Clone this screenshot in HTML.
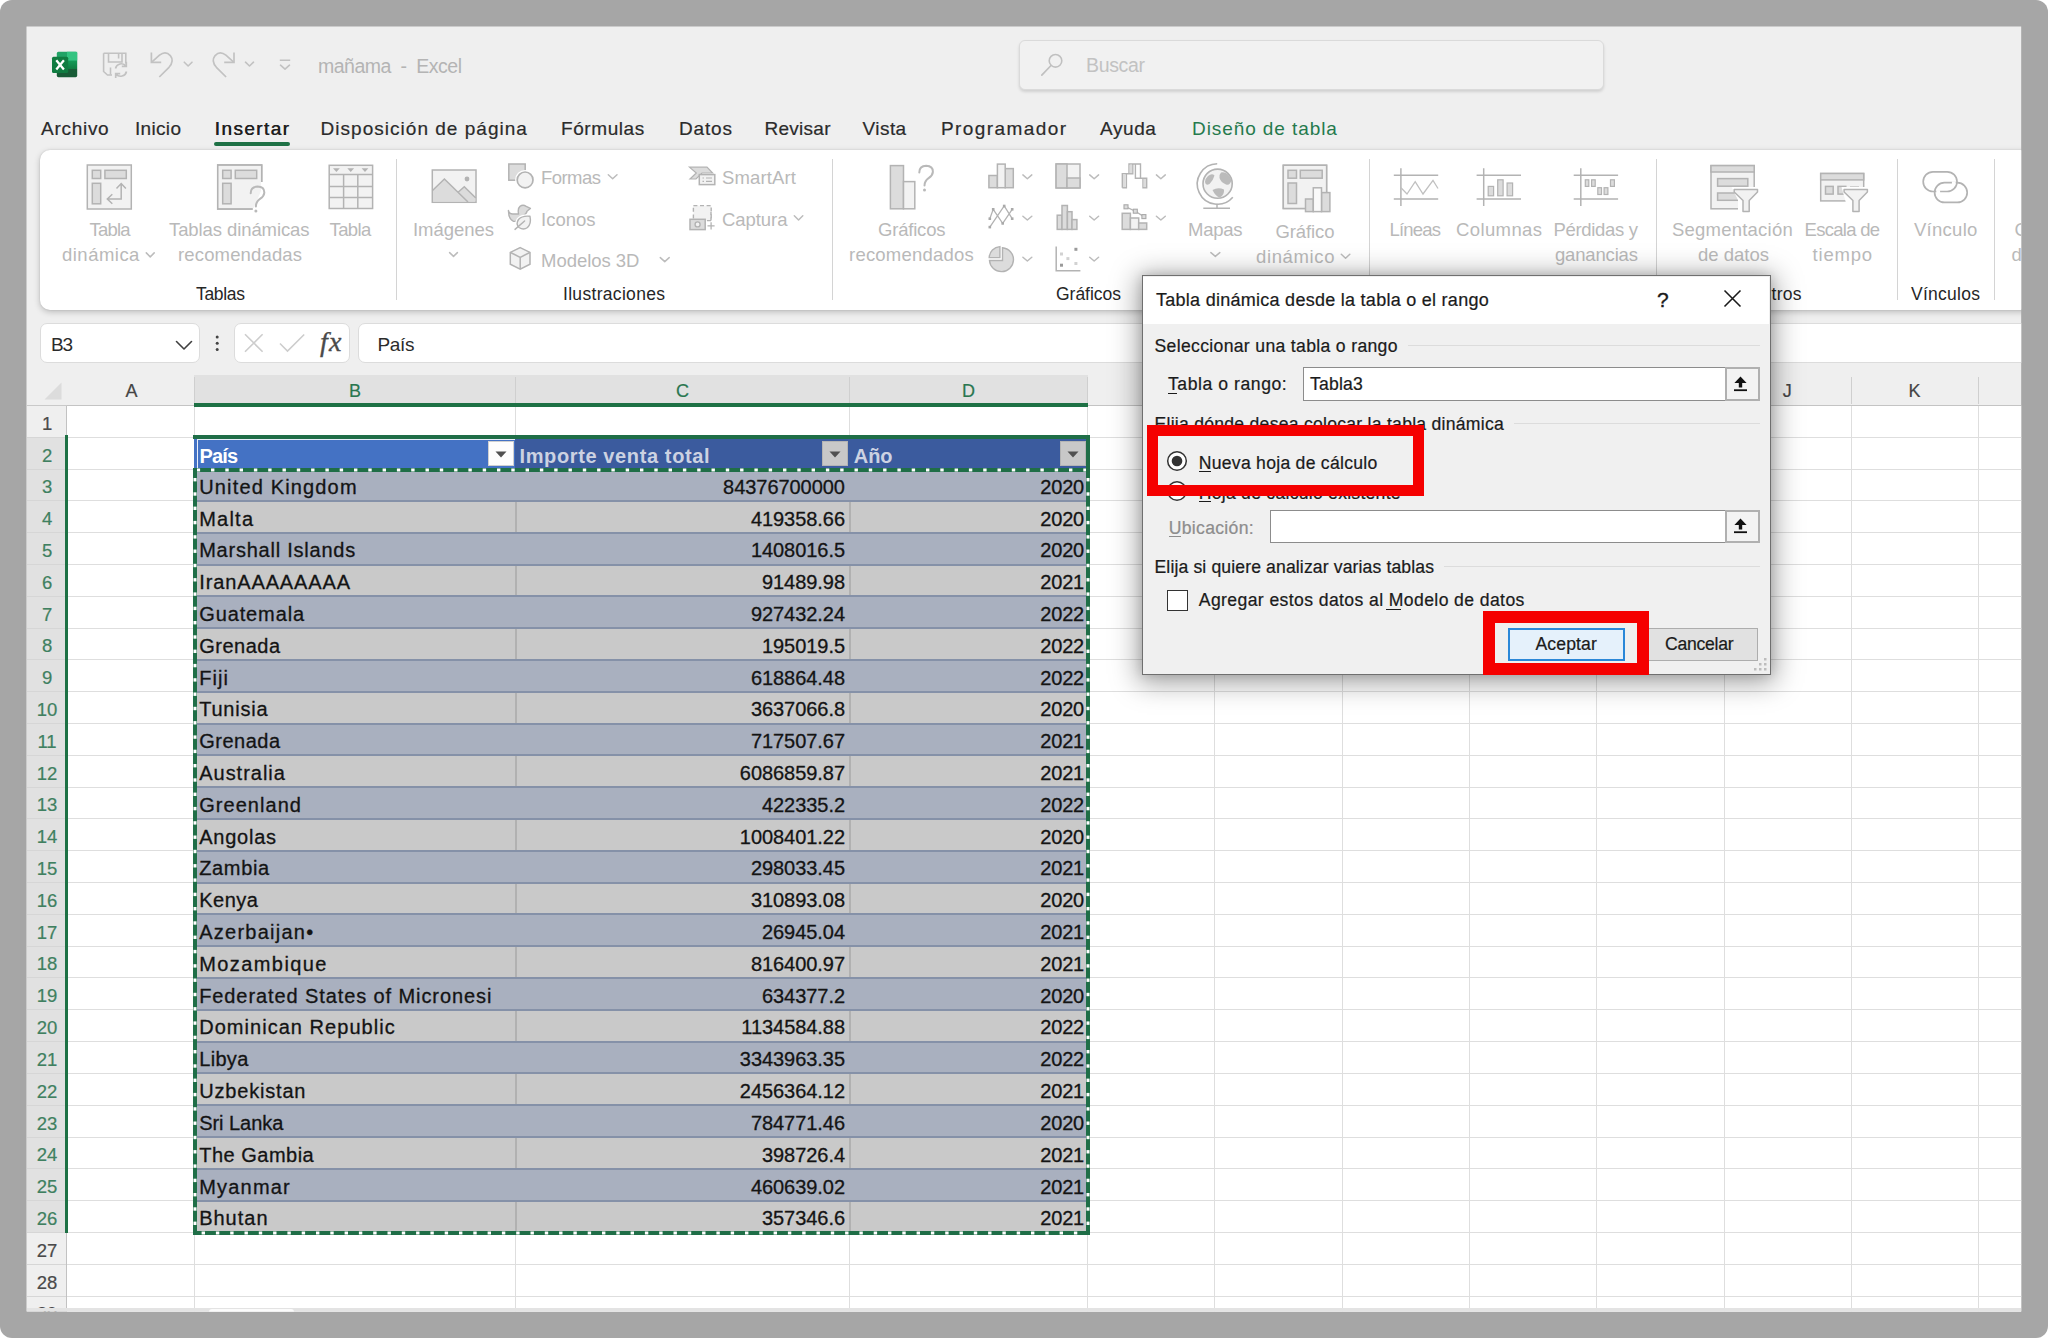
<!DOCTYPE html>
<html><head><meta charset="utf-8"><title>Excel</title>
<style>
html,body{margin:0;padding:0;background:#fff;}
body{width:2048px;height:1338px;position:relative;overflow:hidden;font-family:"Liberation Sans",sans-serif;}
.a{position:absolute;display:block;box-sizing:border-box;}
.t{position:absolute;white-space:pre;line-height:1;font-family:"Liberation Sans",sans-serif;}
#frame{position:absolute;left:0;top:0;width:2048px;height:1338px;background:#a6a6a6;border-radius:12px;}
#win{position:absolute;left:0;top:0;width:2048px;height:1338px;clip-path:inset(26.5px 26.8px 26.5px 26.5px);}
</style></head><body>
<div id="frame"></div>
<div id="win">
<div class="a" style="left:26px;top:26px;width:1996px;height:1286px;background:#efefef;"></div>
<span class="t" style="left:318.00px;top:56.69px;font-size:19.5px;color:#b4b4b4;letter-spacing:-0.517px;">mañama  -  Excel</span>
<div class="a" style="left:1019px;top:40px;width:585px;height:50px;background:#f1f1f1;border:1px solid #dadada;border-radius:6px;box-shadow:0 2px 3px rgba(0,0,0,0.13);"></div>
<span class="t" style="left:1086.00px;top:56.49px;font-size:19.5px;color:#c2c2c2;letter-spacing:-0.350px;">Buscar</span>
<span class="t" style="left:41.00px;top:119.12px;font-size:19px;color:#2b2b2b;letter-spacing:0.721px;-webkit-text-stroke:0.2px #2b2b2b;">Archivo</span>
<span class="t" style="left:135.00px;top:119.12px;font-size:19px;color:#2b2b2b;letter-spacing:0.325px;-webkit-text-stroke:0.2px #2b2b2b;">Inicio</span>
<span class="t" style="left:214.60px;top:119.12px;font-size:19px;color:#1f1f1f;letter-spacing:1.404px;text-shadow:0.4px 0 0 #1f1f1f;">Insertar</span>
<span class="t" style="left:320.60px;top:119.12px;font-size:19px;color:#2b2b2b;letter-spacing:1.020px;-webkit-text-stroke:0.2px #2b2b2b;">Disposición de página</span>
<span class="t" style="left:561.00px;top:119.12px;font-size:19px;color:#2b2b2b;letter-spacing:0.582px;-webkit-text-stroke:0.2px #2b2b2b;">Fórmulas</span>
<span class="t" style="left:679.00px;top:119.12px;font-size:19px;color:#2b2b2b;letter-spacing:0.844px;-webkit-text-stroke:0.2px #2b2b2b;">Datos</span>
<span class="t" style="left:764.50px;top:119.12px;font-size:19px;color:#2b2b2b;letter-spacing:0.271px;-webkit-text-stroke:0.2px #2b2b2b;">Revisar</span>
<span class="t" style="left:862.60px;top:119.12px;font-size:19px;color:#2b2b2b;letter-spacing:0.425px;-webkit-text-stroke:0.2px #2b2b2b;">Vista</span>
<span class="t" style="left:941.00px;top:119.12px;font-size:19px;color:#2b2b2b;letter-spacing:1.413px;-webkit-text-stroke:0.2px #2b2b2b;">Programador</span>
<span class="t" style="left:1100.00px;top:119.12px;font-size:19px;color:#2b2b2b;letter-spacing:0.594px;-webkit-text-stroke:0.2px #2b2b2b;">Ayuda</span>
<span class="t" style="left:1192.00px;top:119.12px;font-size:19px;color:#257a4d;letter-spacing:0.920px;">Diseño de tabla</span>
<div class="a" style="left:214px;top:142px;width:76px;height:4px;background:#1e7145;border-radius:2px;"></div>
<div class="a" style="left:40px;top:150px;width:2000px;height:160px;background:#ffffff;border-radius:10px;box-shadow:0 2px 6px rgba(0,0,0,0.22),0 0 2px rgba(0,0,0,0.12);"></div>
<div class="a" style="left:395.5px;top:159px;width:1.5px;height:141px;background:#d4d4d4;"></div>
<div class="a" style="left:831.5px;top:159px;width:1.5px;height:141px;background:#d4d4d4;"></div>
<div class="a" style="left:1368.5px;top:159px;width:1.5px;height:141px;background:#d4d4d4;"></div>
<div class="a" style="left:1655.5px;top:159px;width:1.5px;height:141px;background:#d4d4d4;"></div>
<div class="a" style="left:1896.5px;top:159px;width:1.5px;height:141px;background:#d4d4d4;"></div>
<div class="a" style="left:1993.5px;top:159px;width:1.5px;height:141px;background:#d4d4d4;"></div>
<span class="t" style="left:196.00px;top:285.89px;font-size:17.5px;color:#262626;letter-spacing:-0.325px;">Tablas</span>
<span class="t" style="left:563.00px;top:285.89px;font-size:17.5px;color:#262626;letter-spacing:0.312px;">Ilustraciones</span>
<span class="t" style="left:1056.00px;top:285.89px;font-size:17.5px;color:#262626;letter-spacing:-0.018px;">Gráficos</span>
<span class="t" style="left:1752.00px;top:285.89px;font-size:17.5px;color:#262626;letter-spacing:0.329px;">Filtros</span>
<span class="t" style="left:1911.00px;top:285.89px;font-size:17.5px;color:#262626;letter-spacing:0.268px;">Vínculos</span>
<span class="t" style="left:89.50px;top:221.04px;font-size:18.5px;color:#b9b9b9;letter-spacing:-0.781px;">Tabla</span>
<span class="t" style="left:62.00px;top:246.04px;font-size:18.5px;color:#b9b9b9;letter-spacing:0.482px;">dinámica</span>
<span class="t" style="left:169.00px;top:221.04px;font-size:18.5px;color:#b9b9b9;letter-spacing:-0.092px;">Tablas dinámicas</span>
<span class="t" style="left:178.00px;top:246.04px;font-size:18.5px;color:#b9b9b9;letter-spacing:0.148px;">recomendadas</span>
<span class="t" style="left:329.50px;top:221.04px;font-size:18.5px;color:#b9b9b9;letter-spacing:-0.594px;">Tabla</span>
<span class="t" style="left:413.00px;top:221.04px;font-size:18.5px;color:#b9b9b9;letter-spacing:-0.036px;">Imágenes</span>
<span class="t" style="left:541.00px;top:169.04px;font-size:18.5px;color:#b9b9b9;letter-spacing:-0.550px;">Formas</span>
<span class="t" style="left:541.00px;top:210.54px;font-size:18.5px;color:#b9b9b9;">Iconos</span>
<span class="t" style="left:541.00px;top:252.04px;font-size:18.5px;color:#b9b9b9;letter-spacing:-0.028px;">Modelos 3D</span>
<span class="t" style="left:722.00px;top:169.04px;font-size:18.5px;color:#b9b9b9;letter-spacing:0.143px;">SmartArt</span>
<span class="t" style="left:722.00px;top:210.54px;font-size:18.5px;color:#b9b9b9;letter-spacing:-0.062px;">Captura</span>
<span class="t" style="left:878.00px;top:221.04px;font-size:18.5px;color:#b9b9b9;letter-spacing:-0.196px;">Gráficos</span>
<span class="t" style="left:849.00px;top:246.04px;font-size:18.5px;color:#b9b9b9;letter-spacing:0.216px;">recomendados</span>
<span class="t" style="left:1188.00px;top:221.04px;font-size:18.5px;color:#b9b9b9;letter-spacing:-0.250px;">Mapas</span>
<span class="t" style="left:1275.50px;top:222.54px;font-size:18.5px;color:#b9b9b9;letter-spacing:-0.104px;">Gráfico</span>
<span class="t" style="left:1256.00px;top:247.54px;font-size:18.5px;color:#b9b9b9;letter-spacing:0.643px;">dinámico</span>
<span class="t" style="left:1389.50px;top:221.04px;font-size:18.5px;color:#b9b9b9;letter-spacing:-0.800px;">Líneas</span>
<span class="t" style="left:1456.00px;top:221.04px;font-size:18.5px;color:#b9b9b9;letter-spacing:0.393px;">Columnas</span>
<span class="t" style="left:1553.40px;top:221.04px;font-size:18.5px;color:#b9b9b9;letter-spacing:-0.308px;">Pérdidas y</span>
<span class="t" style="left:1555.00px;top:246.04px;font-size:18.5px;color:#b9b9b9;letter-spacing:-0.172px;">ganancias</span>
<span class="t" style="left:1672.00px;top:221.04px;font-size:18.5px;color:#b9b9b9;letter-spacing:0.223px;">Segmentación</span>
<span class="t" style="left:1698.00px;top:246.04px;font-size:18.5px;color:#b9b9b9;">de datos</span>
<span class="t" style="left:1804.60px;top:221.04px;font-size:18.5px;color:#b9b9b9;letter-spacing:-0.731px;">Escala de</span>
<span class="t" style="left:1812.60px;top:246.04px;font-size:18.5px;color:#b9b9b9;letter-spacing:0.780px;">tiempo</span>
<span class="t" style="left:1914.00px;top:221.04px;font-size:18.5px;color:#b9b9b9;letter-spacing:0.275px;">Vínculo</span>
<span class="t" style="left:2014.60px;top:221.04px;font-size:18.5px;color:#b9b9b9;">C</span>
<span class="t" style="left:2011.50px;top:246.04px;font-size:18.5px;color:#b9b9b9;">d</span>
<div class="a" style="left:40px;top:323px;width:160px;height:40px;background:#fff;border:1px solid #dcdcdc;border-radius:7px;"></div>
<div class="a" style="left:234px;top:323px;width:116px;height:40px;background:#fff;border:1px solid #dcdcdc;border-radius:7px;"></div>
<div class="a" style="left:358px;top:323px;width:1700px;height:40px;background:#fff;border:1px solid #dcdcdc;border-radius:7px;"></div>
<span class="t" style="left:51.00px;top:335.12px;font-size:19px;color:#2b2b2b;letter-spacing:-1.250px;">B3</span>
<span class="t" style="left:377.50px;top:335.12px;font-size:19px;color:#2b2b2b;letter-spacing:-0.333px;">País</span>
<span class="t" style="left:320.00px;top:328.00px;font-size:28px;color:#4a4a4a;letter-spacing:1.250px;font-style:italic;font-family:'Liberation Serif',serif;-webkit-text-stroke:0.35px #4a4a4a;">fx</span>
<div class="a" style="left:67px;top:406px;width:1960px;height:910px;background:#ffffff;"></div>
<div class="a" style="left:194px;top:375px;width:894px;height:29px;background:#e1e1e1;"></div>
<div class="a" style="left:27px;top:437px;width:39px;height:795px;background:#e1e1e1;"></div>
<div class="a" style="left:27px;top:405px;width:40px;height:1px;background:#c9c9c9;"></div>
<div class="a" style="left:67px;top:405px;width:1960px;height:1px;background:#c4c4c4;"></div>
<div class="a" style="left:27px;top:437px;width:40px;height:1px;background:#d6d6d6;"></div>
<div class="a" style="left:67px;top:437px;width:1960px;height:1px;background:#dedede;"></div>
<div class="a" style="left:27px;top:469px;width:40px;height:1px;background:#d6d6d6;"></div>
<div class="a" style="left:67px;top:469px;width:1960px;height:1px;background:#dedede;"></div>
<div class="a" style="left:27px;top:500px;width:40px;height:1px;background:#d6d6d6;"></div>
<div class="a" style="left:67px;top:500px;width:1960px;height:1px;background:#dedede;"></div>
<div class="a" style="left:27px;top:532px;width:40px;height:1px;background:#d6d6d6;"></div>
<div class="a" style="left:67px;top:532px;width:1960px;height:1px;background:#dedede;"></div>
<div class="a" style="left:27px;top:564px;width:40px;height:1px;background:#d6d6d6;"></div>
<div class="a" style="left:67px;top:564px;width:1960px;height:1px;background:#dedede;"></div>
<div class="a" style="left:27px;top:596px;width:40px;height:1px;background:#d6d6d6;"></div>
<div class="a" style="left:67px;top:596px;width:1960px;height:1px;background:#dedede;"></div>
<div class="a" style="left:27px;top:628px;width:40px;height:1px;background:#d6d6d6;"></div>
<div class="a" style="left:67px;top:628px;width:1960px;height:1px;background:#dedede;"></div>
<div class="a" style="left:27px;top:659px;width:40px;height:1px;background:#d6d6d6;"></div>
<div class="a" style="left:67px;top:659px;width:1960px;height:1px;background:#dedede;"></div>
<div class="a" style="left:27px;top:691px;width:40px;height:1px;background:#d6d6d6;"></div>
<div class="a" style="left:67px;top:691px;width:1960px;height:1px;background:#dedede;"></div>
<div class="a" style="left:27px;top:723px;width:40px;height:1px;background:#d6d6d6;"></div>
<div class="a" style="left:67px;top:723px;width:1960px;height:1px;background:#dedede;"></div>
<div class="a" style="left:27px;top:755px;width:40px;height:1px;background:#d6d6d6;"></div>
<div class="a" style="left:67px;top:755px;width:1960px;height:1px;background:#dedede;"></div>
<div class="a" style="left:27px;top:787px;width:40px;height:1px;background:#d6d6d6;"></div>
<div class="a" style="left:67px;top:787px;width:1960px;height:1px;background:#dedede;"></div>
<div class="a" style="left:27px;top:818px;width:40px;height:1px;background:#d6d6d6;"></div>
<div class="a" style="left:67px;top:818px;width:1960px;height:1px;background:#dedede;"></div>
<div class="a" style="left:27px;top:850px;width:40px;height:1px;background:#d6d6d6;"></div>
<div class="a" style="left:67px;top:850px;width:1960px;height:1px;background:#dedede;"></div>
<div class="a" style="left:27px;top:882px;width:40px;height:1px;background:#d6d6d6;"></div>
<div class="a" style="left:67px;top:882px;width:1960px;height:1px;background:#dedede;"></div>
<div class="a" style="left:27px;top:914px;width:40px;height:1px;background:#d6d6d6;"></div>
<div class="a" style="left:67px;top:914px;width:1960px;height:1px;background:#dedede;"></div>
<div class="a" style="left:27px;top:946px;width:40px;height:1px;background:#d6d6d6;"></div>
<div class="a" style="left:67px;top:946px;width:1960px;height:1px;background:#dedede;"></div>
<div class="a" style="left:27px;top:977px;width:40px;height:1px;background:#d6d6d6;"></div>
<div class="a" style="left:67px;top:977px;width:1960px;height:1px;background:#dedede;"></div>
<div class="a" style="left:27px;top:1009px;width:40px;height:1px;background:#d6d6d6;"></div>
<div class="a" style="left:67px;top:1009px;width:1960px;height:1px;background:#dedede;"></div>
<div class="a" style="left:27px;top:1041px;width:40px;height:1px;background:#d6d6d6;"></div>
<div class="a" style="left:67px;top:1041px;width:1960px;height:1px;background:#dedede;"></div>
<div class="a" style="left:27px;top:1073px;width:40px;height:1px;background:#d6d6d6;"></div>
<div class="a" style="left:67px;top:1073px;width:1960px;height:1px;background:#dedede;"></div>
<div class="a" style="left:27px;top:1105px;width:40px;height:1px;background:#d6d6d6;"></div>
<div class="a" style="left:67px;top:1105px;width:1960px;height:1px;background:#dedede;"></div>
<div class="a" style="left:27px;top:1137px;width:40px;height:1px;background:#d6d6d6;"></div>
<div class="a" style="left:67px;top:1137px;width:1960px;height:1px;background:#dedede;"></div>
<div class="a" style="left:27px;top:1168px;width:40px;height:1px;background:#d6d6d6;"></div>
<div class="a" style="left:67px;top:1168px;width:1960px;height:1px;background:#dedede;"></div>
<div class="a" style="left:27px;top:1200px;width:40px;height:1px;background:#d6d6d6;"></div>
<div class="a" style="left:67px;top:1200px;width:1960px;height:1px;background:#dedede;"></div>
<div class="a" style="left:27px;top:1232px;width:40px;height:1px;background:#d6d6d6;"></div>
<div class="a" style="left:67px;top:1232px;width:1960px;height:1px;background:#dedede;"></div>
<div class="a" style="left:27px;top:1264px;width:40px;height:1px;background:#d6d6d6;"></div>
<div class="a" style="left:67px;top:1264px;width:1960px;height:1px;background:#dedede;"></div>
<div class="a" style="left:27px;top:1296px;width:40px;height:1px;background:#d6d6d6;"></div>
<div class="a" style="left:67px;top:1296px;width:1960px;height:1px;background:#dedede;"></div>
<div class="a" style="left:27px;top:1327px;width:40px;height:1px;background:#d6d6d6;"></div>
<div class="a" style="left:67px;top:1327px;width:1960px;height:1px;background:#dedede;"></div>
<div class="a" style="left:66px;top:406px;width:1px;height:910px;background:#c2c2c2;"></div>
<div class="a" style="left:194px;top:406px;width:1px;height:910px;background:#dedede;"></div>
<div class="a" style="left:194px;top:377px;width:1px;height:27px;background:#cfcfcf;"></div>
<div class="a" style="left:515px;top:406px;width:1px;height:910px;background:#dedede;"></div>
<div class="a" style="left:515px;top:377px;width:1px;height:27px;background:#cfcfcf;"></div>
<div class="a" style="left:849px;top:406px;width:1px;height:910px;background:#dedede;"></div>
<div class="a" style="left:849px;top:377px;width:1px;height:27px;background:#cfcfcf;"></div>
<div class="a" style="left:1087px;top:406px;width:1px;height:910px;background:#dedede;"></div>
<div class="a" style="left:1087px;top:377px;width:1px;height:27px;background:#cfcfcf;"></div>
<div class="a" style="left:1214px;top:406px;width:1px;height:910px;background:#dedede;"></div>
<div class="a" style="left:1214px;top:377px;width:1px;height:27px;background:#cfcfcf;"></div>
<div class="a" style="left:1342px;top:406px;width:1px;height:910px;background:#dedede;"></div>
<div class="a" style="left:1342px;top:377px;width:1px;height:27px;background:#cfcfcf;"></div>
<div class="a" style="left:1469px;top:406px;width:1px;height:910px;background:#dedede;"></div>
<div class="a" style="left:1469px;top:377px;width:1px;height:27px;background:#cfcfcf;"></div>
<div class="a" style="left:1596px;top:406px;width:1px;height:910px;background:#dedede;"></div>
<div class="a" style="left:1596px;top:377px;width:1px;height:27px;background:#cfcfcf;"></div>
<div class="a" style="left:1724px;top:406px;width:1px;height:910px;background:#dedede;"></div>
<div class="a" style="left:1724px;top:377px;width:1px;height:27px;background:#cfcfcf;"></div>
<div class="a" style="left:1851px;top:406px;width:1px;height:910px;background:#dedede;"></div>
<div class="a" style="left:1851px;top:377px;width:1px;height:27px;background:#cfcfcf;"></div>
<div class="a" style="left:1978px;top:406px;width:1px;height:910px;background:#dedede;"></div>
<div class="a" style="left:1978px;top:377px;width:1px;height:27px;background:#cfcfcf;"></div>
<span class="t" style="left:125.50px;top:382.46px;font-size:18px;color:#454545;-webkit-text-stroke:0.2px #454545;">A</span>
<span class="t" style="left:349.00px;top:382.46px;font-size:18px;color:#2a7750;-webkit-text-stroke:0.2px #2a7750;">B</span>
<span class="t" style="left:676.00px;top:382.46px;font-size:18px;color:#2a7750;-webkit-text-stroke:0.2px #2a7750;">C</span>
<span class="t" style="left:962.00px;top:382.46px;font-size:18px;color:#2a7750;-webkit-text-stroke:0.2px #2a7750;">D</span>
<span class="t" style="left:1782.80px;top:382.46px;font-size:18px;color:#454545;-webkit-text-stroke:0.2px #454545;">J</span>
<span class="t" style="left:1908.50px;top:382.46px;font-size:18px;color:#454545;-webkit-text-stroke:0.2px #454545;">K</span>
<span class="t" style="left:41.88px;top:414.54px;font-size:18.5px;color:#4a4a4a;-webkit-text-stroke:0.2px #4a4a4a;">1</span>
<span class="t" style="left:41.88px;top:446.54px;font-size:18.5px;color:#3f8060;-webkit-text-stroke:0.2px #3f8060;">2</span>
<span class="t" style="left:41.88px;top:477.54px;font-size:18.5px;color:#3f8060;-webkit-text-stroke:0.2px #3f8060;">3</span>
<span class="t" style="left:41.88px;top:509.54px;font-size:18.5px;color:#3f8060;-webkit-text-stroke:0.2px #3f8060;">4</span>
<span class="t" style="left:41.88px;top:541.54px;font-size:18.5px;color:#3f8060;-webkit-text-stroke:0.2px #3f8060;">5</span>
<span class="t" style="left:41.88px;top:573.54px;font-size:18.5px;color:#3f8060;-webkit-text-stroke:0.2px #3f8060;">6</span>
<span class="t" style="left:41.88px;top:605.54px;font-size:18.5px;color:#3f8060;-webkit-text-stroke:0.2px #3f8060;">7</span>
<span class="t" style="left:41.88px;top:636.54px;font-size:18.5px;color:#3f8060;-webkit-text-stroke:0.2px #3f8060;">8</span>
<span class="t" style="left:41.88px;top:668.54px;font-size:18.5px;color:#3f8060;-webkit-text-stroke:0.2px #3f8060;">9</span>
<span class="t" style="left:36.69px;top:700.54px;font-size:18.5px;color:#3f8060;-webkit-text-stroke:0.2px #3f8060;">10</span>
<span class="t" style="left:37.38px;top:732.54px;font-size:18.5px;color:#3f8060;-webkit-text-stroke:0.2px #3f8060;">11</span>
<span class="t" style="left:36.69px;top:764.54px;font-size:18.5px;color:#3f8060;-webkit-text-stroke:0.2px #3f8060;">12</span>
<span class="t" style="left:36.69px;top:795.54px;font-size:18.5px;color:#3f8060;-webkit-text-stroke:0.2px #3f8060;">13</span>
<span class="t" style="left:36.69px;top:827.54px;font-size:18.5px;color:#3f8060;-webkit-text-stroke:0.2px #3f8060;">14</span>
<span class="t" style="left:36.69px;top:859.54px;font-size:18.5px;color:#3f8060;-webkit-text-stroke:0.2px #3f8060;">15</span>
<span class="t" style="left:36.69px;top:891.54px;font-size:18.5px;color:#3f8060;-webkit-text-stroke:0.2px #3f8060;">16</span>
<span class="t" style="left:36.69px;top:923.54px;font-size:18.5px;color:#3f8060;-webkit-text-stroke:0.2px #3f8060;">17</span>
<span class="t" style="left:36.69px;top:954.54px;font-size:18.5px;color:#3f8060;-webkit-text-stroke:0.2px #3f8060;">18</span>
<span class="t" style="left:36.69px;top:986.54px;font-size:18.5px;color:#3f8060;-webkit-text-stroke:0.2px #3f8060;">19</span>
<span class="t" style="left:36.69px;top:1018.54px;font-size:18.5px;color:#3f8060;-webkit-text-stroke:0.2px #3f8060;">20</span>
<span class="t" style="left:36.69px;top:1050.54px;font-size:18.5px;color:#3f8060;-webkit-text-stroke:0.2px #3f8060;">21</span>
<span class="t" style="left:36.69px;top:1082.54px;font-size:18.5px;color:#3f8060;-webkit-text-stroke:0.2px #3f8060;">22</span>
<span class="t" style="left:36.69px;top:1114.54px;font-size:18.5px;color:#3f8060;-webkit-text-stroke:0.2px #3f8060;">23</span>
<span class="t" style="left:36.69px;top:1145.54px;font-size:18.5px;color:#3f8060;-webkit-text-stroke:0.2px #3f8060;">24</span>
<span class="t" style="left:36.69px;top:1177.54px;font-size:18.5px;color:#3f8060;-webkit-text-stroke:0.2px #3f8060;">25</span>
<span class="t" style="left:36.69px;top:1209.54px;font-size:18.5px;color:#3f8060;-webkit-text-stroke:0.2px #3f8060;">26</span>
<span class="t" style="left:36.69px;top:1241.54px;font-size:18.5px;color:#4a4a4a;-webkit-text-stroke:0.2px #4a4a4a;">27</span>
<span class="t" style="left:36.69px;top:1273.54px;font-size:18.5px;color:#4a4a4a;-webkit-text-stroke:0.2px #4a4a4a;">28</span>
<span class="t" style="left:36.69px;top:1304.54px;font-size:18.5px;color:#4a4a4a;-webkit-text-stroke:0.2px #4a4a4a;">29</span>
<svg class="a" style="left:44px;top:382px;" width="18" height="18" viewBox="0 0 18 18"><path d="M17.5 0.5 L17.5 17.5 L0.5 17.5 Z" fill="#dcdcdc"/></svg>
<div class="a" style="left:194px;top:403px;width:894px;height:4px;background:#1e7145;"></div>
<div class="a" style="left:65px;top:435px;width:3px;height:798px;background:#1e7145;"></div>
<div class="a" style="left:194px;top:469px;width:894px;height:32px;background:#a9b0bf;"></div>
<div class="a" style="left:194px;top:501px;width:894px;height:32px;background:#c9c9c9;"></div>
<div class="a" style="left:515px;top:501px;width:1.5px;height:32px;background:#b1b1b1;"></div>
<div class="a" style="left:849px;top:501px;width:1.5px;height:32px;background:#b1b1b1;"></div>
<div class="a" style="left:194px;top:533px;width:894px;height:32px;background:#a9b0bf;"></div>
<div class="a" style="left:194px;top:565px;width:894px;height:31px;background:#c9c9c9;"></div>
<div class="a" style="left:515px;top:565px;width:1.5px;height:31px;background:#b1b1b1;"></div>
<div class="a" style="left:849px;top:565px;width:1.5px;height:31px;background:#b1b1b1;"></div>
<div class="a" style="left:194px;top:596px;width:894px;height:32px;background:#a9b0bf;"></div>
<div class="a" style="left:194px;top:628px;width:894px;height:32px;background:#c9c9c9;"></div>
<div class="a" style="left:515px;top:628px;width:1.5px;height:32px;background:#b1b1b1;"></div>
<div class="a" style="left:849px;top:628px;width:1.5px;height:32px;background:#b1b1b1;"></div>
<div class="a" style="left:194px;top:660px;width:894px;height:32px;background:#a9b0bf;"></div>
<div class="a" style="left:194px;top:692px;width:894px;height:32px;background:#c9c9c9;"></div>
<div class="a" style="left:515px;top:692px;width:1.5px;height:32px;background:#b1b1b1;"></div>
<div class="a" style="left:849px;top:692px;width:1.5px;height:32px;background:#b1b1b1;"></div>
<div class="a" style="left:194px;top:724px;width:894px;height:31px;background:#a9b0bf;"></div>
<div class="a" style="left:194px;top:755px;width:894px;height:32px;background:#c9c9c9;"></div>
<div class="a" style="left:515px;top:755px;width:1.5px;height:32px;background:#b1b1b1;"></div>
<div class="a" style="left:849px;top:755px;width:1.5px;height:32px;background:#b1b1b1;"></div>
<div class="a" style="left:194px;top:787px;width:894px;height:32px;background:#a9b0bf;"></div>
<div class="a" style="left:194px;top:819px;width:894px;height:32px;background:#c9c9c9;"></div>
<div class="a" style="left:515px;top:819px;width:1.5px;height:32px;background:#b1b1b1;"></div>
<div class="a" style="left:849px;top:819px;width:1.5px;height:32px;background:#b1b1b1;"></div>
<div class="a" style="left:194px;top:851px;width:894px;height:32px;background:#a9b0bf;"></div>
<div class="a" style="left:194px;top:883px;width:894px;height:31px;background:#c9c9c9;"></div>
<div class="a" style="left:515px;top:883px;width:1.5px;height:31px;background:#b1b1b1;"></div>
<div class="a" style="left:849px;top:883px;width:1.5px;height:31px;background:#b1b1b1;"></div>
<div class="a" style="left:194px;top:914px;width:894px;height:32px;background:#a9b0bf;"></div>
<div class="a" style="left:194px;top:946px;width:894px;height:32px;background:#c9c9c9;"></div>
<div class="a" style="left:515px;top:946px;width:1.5px;height:32px;background:#b1b1b1;"></div>
<div class="a" style="left:849px;top:946px;width:1.5px;height:32px;background:#b1b1b1;"></div>
<div class="a" style="left:194px;top:978px;width:894px;height:32px;background:#a9b0bf;"></div>
<div class="a" style="left:194px;top:1010px;width:894px;height:32px;background:#c9c9c9;"></div>
<div class="a" style="left:515px;top:1010px;width:1.5px;height:32px;background:#b1b1b1;"></div>
<div class="a" style="left:849px;top:1010px;width:1.5px;height:32px;background:#b1b1b1;"></div>
<div class="a" style="left:194px;top:1042px;width:894px;height:31px;background:#a9b0bf;"></div>
<div class="a" style="left:194px;top:1073px;width:894px;height:32px;background:#c9c9c9;"></div>
<div class="a" style="left:515px;top:1073px;width:1.5px;height:32px;background:#b1b1b1;"></div>
<div class="a" style="left:849px;top:1073px;width:1.5px;height:32px;background:#b1b1b1;"></div>
<div class="a" style="left:194px;top:1105px;width:894px;height:32px;background:#a9b0bf;"></div>
<div class="a" style="left:194px;top:1137px;width:894px;height:32px;background:#c9c9c9;"></div>
<div class="a" style="left:515px;top:1137px;width:1.5px;height:32px;background:#b1b1b1;"></div>
<div class="a" style="left:849px;top:1137px;width:1.5px;height:32px;background:#b1b1b1;"></div>
<div class="a" style="left:194px;top:1169px;width:894px;height:32px;background:#a9b0bf;"></div>
<div class="a" style="left:194px;top:1201px;width:894px;height:31px;background:#c9c9c9;"></div>
<div class="a" style="left:515px;top:1201px;width:1.5px;height:31px;background:#b1b1b1;"></div>
<div class="a" style="left:849px;top:1201px;width:1.5px;height:31px;background:#b1b1b1;"></div>
<div class="a" style="left:194px;top:500px;width:894px;height:2px;background:#8591a8;"></div>
<div class="a" style="left:194px;top:532px;width:894px;height:2px;background:#8591a8;"></div>
<div class="a" style="left:194px;top:564px;width:894px;height:2px;background:#8591a8;"></div>
<div class="a" style="left:194px;top:595px;width:894px;height:2px;background:#8591a8;"></div>
<div class="a" style="left:194px;top:627px;width:894px;height:2px;background:#8591a8;"></div>
<div class="a" style="left:194px;top:659px;width:894px;height:2px;background:#8591a8;"></div>
<div class="a" style="left:194px;top:691px;width:894px;height:2px;background:#8591a8;"></div>
<div class="a" style="left:194px;top:723px;width:894px;height:2px;background:#8591a8;"></div>
<div class="a" style="left:194px;top:754px;width:894px;height:2px;background:#8591a8;"></div>
<div class="a" style="left:194px;top:786px;width:894px;height:2px;background:#8591a8;"></div>
<div class="a" style="left:194px;top:818px;width:894px;height:2px;background:#8591a8;"></div>
<div class="a" style="left:194px;top:850px;width:894px;height:2px;background:#8591a8;"></div>
<div class="a" style="left:194px;top:882px;width:894px;height:2px;background:#8591a8;"></div>
<div class="a" style="left:194px;top:913px;width:894px;height:2px;background:#8591a8;"></div>
<div class="a" style="left:194px;top:945px;width:894px;height:2px;background:#8591a8;"></div>
<div class="a" style="left:194px;top:977px;width:894px;height:2px;background:#8591a8;"></div>
<div class="a" style="left:194px;top:1009px;width:894px;height:2px;background:#8591a8;"></div>
<div class="a" style="left:194px;top:1041px;width:894px;height:2px;background:#8591a8;"></div>
<div class="a" style="left:194px;top:1072px;width:894px;height:2px;background:#8591a8;"></div>
<div class="a" style="left:194px;top:1104px;width:894px;height:2px;background:#8591a8;"></div>
<div class="a" style="left:194px;top:1136px;width:894px;height:2px;background:#8591a8;"></div>
<div class="a" style="left:194px;top:1168px;width:894px;height:2px;background:#8591a8;"></div>
<div class="a" style="left:194px;top:1200px;width:894px;height:2px;background:#8591a8;"></div>
<div class="a" style="left:194px;top:438px;width:321px;height:31px;background:#4472c4;"></div>
<div class="a" style="left:515px;top:438px;width:573px;height:31px;background:#3b5b9e;"></div>
<div class="a" style="left:196.5px;top:439px;width:318.5px;height:1px;background:#e9eefa;"></div>
<div class="a" style="left:196.5px;top:439px;width:1px;height:29px;background:#e9eefa;"></div>
<span class="t" style="left:199.50px;top:445.77px;font-size:20px;color:#ffffff;letter-spacing:-0.875px;font-weight:700;">País</span>
<span class="t" style="left:519.50px;top:445.77px;font-size:20px;color:#ccd2e2;letter-spacing:0.618px;font-weight:700;">Importe venta total</span>
<span class="t" style="left:853.80px;top:445.77px;font-size:20px;color:#ccd2e2;letter-spacing:-0.087px;font-weight:700;">Año</span>
<div class="a" style="left:488px;top:441px;width:26px;height:25px;background:#fdfdfd;border:1px solid #d0d0d0;"></div>
<svg class="a" style="left:495px;top:451px;" width="12" height="7" viewBox="0 0 12 7"><path d="M0.5 0.5 L11.5 0.5 L6 6.5 Z" fill="#505050"/></svg>
<div class="a" style="left:822px;top:441px;width:26px;height:25px;background:#c8c8c8;border:1px solid #b4b4b4;"></div>
<svg class="a" style="left:829px;top:451px;" width="12" height="7" viewBox="0 0 12 7"><path d="M0.5 0.5 L11.5 0.5 L6 6.5 Z" fill="#505050"/></svg>
<div class="a" style="left:1060px;top:441px;width:26px;height:25px;background:#c8c8c8;border:1px solid #b4b4b4;"></div>
<svg class="a" style="left:1067px;top:451px;" width="12" height="7" viewBox="0 0 12 7"><path d="M0.5 0.5 L11.5 0.5 L6 6.5 Z" fill="#505050"/></svg>
<span class="t" style="left:199.20px;top:477.27px;font-size:20px;color:#141414;letter-spacing:1.158px;-webkit-text-stroke:0.3px #141414;">United Kingdom</span>
<span class="t" style="left:723.12px;top:477.27px;font-size:20px;color:#141414;letter-spacing:-0.050px;-webkit-text-stroke:0.3px #141414;">84376700000</span>
<span class="t" style="left:1040.30px;top:477.27px;font-size:20px;color:#141414;letter-spacing:-0.200px;-webkit-text-stroke:0.3px #141414;">2020</span>
<span class="t" style="left:199.20px;top:509.27px;font-size:20px;color:#141414;letter-spacing:1.231px;-webkit-text-stroke:0.3px #141414;">Malta</span>
<span class="t" style="left:750.90px;top:509.27px;font-size:20px;color:#141414;letter-spacing:-0.050px;-webkit-text-stroke:0.3px #141414;">419358.66</span>
<span class="t" style="left:1040.30px;top:509.27px;font-size:20px;color:#141414;letter-spacing:-0.200px;-webkit-text-stroke:0.3px #141414;">2020</span>
<span class="t" style="left:199.20px;top:540.27px;font-size:20px;color:#141414;letter-spacing:0.767px;-webkit-text-stroke:0.3px #141414;">Marshall Islands</span>
<span class="t" style="left:750.90px;top:540.27px;font-size:20px;color:#141414;letter-spacing:-0.050px;-webkit-text-stroke:0.3px #141414;">1408016.5</span>
<span class="t" style="left:1040.30px;top:540.27px;font-size:20px;color:#141414;letter-spacing:-0.200px;-webkit-text-stroke:0.3px #141414;">2020</span>
<span class="t" style="left:199.20px;top:572.27px;font-size:20px;color:#141414;letter-spacing:0.886px;-webkit-text-stroke:0.3px #141414;">IranAAAAAAAA</span>
<span class="t" style="left:761.98px;top:572.27px;font-size:20px;color:#141414;letter-spacing:-0.050px;-webkit-text-stroke:0.3px #141414;">91489.98</span>
<span class="t" style="left:1040.30px;top:572.27px;font-size:20px;color:#141414;letter-spacing:-0.200px;-webkit-text-stroke:0.3px #141414;">2021</span>
<span class="t" style="left:199.20px;top:604.27px;font-size:20px;color:#141414;letter-spacing:0.891px;-webkit-text-stroke:0.3px #141414;">Guatemala</span>
<span class="t" style="left:750.90px;top:604.27px;font-size:20px;color:#141414;letter-spacing:-0.050px;-webkit-text-stroke:0.3px #141414;">927432.24</span>
<span class="t" style="left:1040.30px;top:604.27px;font-size:20px;color:#141414;letter-spacing:-0.200px;-webkit-text-stroke:0.3px #141414;">2022</span>
<span class="t" style="left:199.20px;top:636.27px;font-size:20px;color:#141414;letter-spacing:0.504px;-webkit-text-stroke:0.3px #141414;">Grenada</span>
<span class="t" style="left:761.98px;top:636.27px;font-size:20px;color:#141414;letter-spacing:-0.050px;-webkit-text-stroke:0.3px #141414;">195019.5</span>
<span class="t" style="left:1040.30px;top:636.27px;font-size:20px;color:#141414;letter-spacing:-0.200px;-webkit-text-stroke:0.3px #141414;">2022</span>
<span class="t" style="left:199.20px;top:668.27px;font-size:20px;color:#141414;letter-spacing:1.033px;-webkit-text-stroke:0.3px #141414;">Fiji</span>
<span class="t" style="left:750.90px;top:668.27px;font-size:20px;color:#141414;letter-spacing:-0.050px;-webkit-text-stroke:0.3px #141414;">618864.48</span>
<span class="t" style="left:1040.30px;top:668.27px;font-size:20px;color:#141414;letter-spacing:-0.200px;-webkit-text-stroke:0.3px #141414;">2022</span>
<span class="t" style="left:199.20px;top:699.27px;font-size:20px;color:#141414;letter-spacing:0.792px;-webkit-text-stroke:0.3px #141414;">Tunisia</span>
<span class="t" style="left:750.90px;top:699.27px;font-size:20px;color:#141414;letter-spacing:-0.050px;-webkit-text-stroke:0.3px #141414;">3637066.8</span>
<span class="t" style="left:1040.30px;top:699.27px;font-size:20px;color:#141414;letter-spacing:-0.200px;-webkit-text-stroke:0.3px #141414;">2020</span>
<span class="t" style="left:199.20px;top:731.27px;font-size:20px;color:#141414;letter-spacing:0.504px;-webkit-text-stroke:0.3px #141414;">Grenada</span>
<span class="t" style="left:750.90px;top:731.27px;font-size:20px;color:#141414;letter-spacing:-0.050px;-webkit-text-stroke:0.3px #141414;">717507.67</span>
<span class="t" style="left:1040.30px;top:731.27px;font-size:20px;color:#141414;letter-spacing:-0.200px;-webkit-text-stroke:0.3px #141414;">2021</span>
<span class="t" style="left:199.20px;top:763.27px;font-size:20px;color:#141414;letter-spacing:0.991px;-webkit-text-stroke:0.3px #141414;">Australia</span>
<span class="t" style="left:739.83px;top:763.27px;font-size:20px;color:#141414;letter-spacing:-0.050px;-webkit-text-stroke:0.3px #141414;">6086859.87</span>
<span class="t" style="left:1040.30px;top:763.27px;font-size:20px;color:#141414;letter-spacing:-0.200px;-webkit-text-stroke:0.3px #141414;">2021</span>
<span class="t" style="left:199.20px;top:795.27px;font-size:20px;color:#141414;letter-spacing:1.041px;-webkit-text-stroke:0.3px #141414;">Greenland</span>
<span class="t" style="left:761.98px;top:795.27px;font-size:20px;color:#141414;letter-spacing:-0.050px;-webkit-text-stroke:0.3px #141414;">422335.2</span>
<span class="t" style="left:1040.30px;top:795.27px;font-size:20px;color:#141414;letter-spacing:-0.200px;-webkit-text-stroke:0.3px #141414;">2022</span>
<span class="t" style="left:199.20px;top:827.27px;font-size:20px;color:#141414;letter-spacing:0.758px;-webkit-text-stroke:0.3px #141414;">Angolas</span>
<span class="t" style="left:739.83px;top:827.27px;font-size:20px;color:#141414;letter-spacing:-0.050px;-webkit-text-stroke:0.3px #141414;">1008401.22</span>
<span class="t" style="left:1040.30px;top:827.27px;font-size:20px;color:#141414;letter-spacing:-0.200px;-webkit-text-stroke:0.3px #141414;">2020</span>
<span class="t" style="left:199.20px;top:858.27px;font-size:20px;color:#141414;letter-spacing:0.650px;-webkit-text-stroke:0.3px #141414;">Zambia</span>
<span class="t" style="left:750.90px;top:858.27px;font-size:20px;color:#141414;letter-spacing:-0.050px;-webkit-text-stroke:0.3px #141414;">298033.45</span>
<span class="t" style="left:1040.30px;top:858.27px;font-size:20px;color:#141414;letter-spacing:-0.200px;-webkit-text-stroke:0.3px #141414;">2021</span>
<span class="t" style="left:199.20px;top:890.27px;font-size:20px;color:#141414;letter-spacing:0.513px;-webkit-text-stroke:0.3px #141414;">Kenya</span>
<span class="t" style="left:750.90px;top:890.27px;font-size:20px;color:#141414;letter-spacing:-0.050px;-webkit-text-stroke:0.3px #141414;">310893.08</span>
<span class="t" style="left:1040.30px;top:890.27px;font-size:20px;color:#141414;letter-spacing:-0.200px;-webkit-text-stroke:0.3px #141414;">2020</span>
<span class="t" style="left:199.20px;top:922.27px;font-size:20px;color:#141414;letter-spacing:1.250px;-webkit-text-stroke:0.3px #141414;">Azerbaijan•</span>
<span class="t" style="left:761.98px;top:922.27px;font-size:20px;color:#141414;letter-spacing:-0.050px;-webkit-text-stroke:0.3px #141414;">26945.04</span>
<span class="t" style="left:1040.30px;top:922.27px;font-size:20px;color:#141414;letter-spacing:-0.200px;-webkit-text-stroke:0.3px #141414;">2021</span>
<span class="t" style="left:199.20px;top:954.27px;font-size:20px;color:#141414;letter-spacing:1.422px;-webkit-text-stroke:0.3px #141414;">Mozambique</span>
<span class="t" style="left:750.90px;top:954.27px;font-size:20px;color:#141414;letter-spacing:-0.050px;-webkit-text-stroke:0.3px #141414;">816400.97</span>
<span class="t" style="left:1040.30px;top:954.27px;font-size:20px;color:#141414;letter-spacing:-0.200px;-webkit-text-stroke:0.3px #141414;">2021</span>
<span class="t" style="left:199.20px;top:986.27px;font-size:20px;color:#141414;letter-spacing:0.905px;-webkit-text-stroke:0.3px #141414;">Federated States of Micronesi</span>
<span class="t" style="left:761.98px;top:986.27px;font-size:20px;color:#141414;letter-spacing:-0.050px;-webkit-text-stroke:0.3px #141414;">634377.2</span>
<span class="t" style="left:1040.30px;top:986.27px;font-size:20px;color:#141414;letter-spacing:-0.200px;-webkit-text-stroke:0.3px #141414;">2020</span>
<span class="t" style="left:199.20px;top:1017.27px;font-size:20px;color:#141414;letter-spacing:1.037px;-webkit-text-stroke:0.3px #141414;">Dominican Republic</span>
<span class="t" style="left:741.33px;top:1017.27px;font-size:20px;color:#141414;letter-spacing:-0.050px;-webkit-text-stroke:0.3px #141414;">1134584.88</span>
<span class="t" style="left:1040.30px;top:1017.27px;font-size:20px;color:#141414;letter-spacing:-0.200px;-webkit-text-stroke:0.3px #141414;">2022</span>
<span class="t" style="left:199.20px;top:1049.27px;font-size:20px;color:#141414;letter-spacing:0.331px;-webkit-text-stroke:0.3px #141414;">Libya</span>
<span class="t" style="left:739.83px;top:1049.27px;font-size:20px;color:#141414;letter-spacing:-0.050px;-webkit-text-stroke:0.3px #141414;">3343963.35</span>
<span class="t" style="left:1040.30px;top:1049.27px;font-size:20px;color:#141414;letter-spacing:-0.200px;-webkit-text-stroke:0.3px #141414;">2022</span>
<span class="t" style="left:199.20px;top:1081.27px;font-size:20px;color:#141414;letter-spacing:0.814px;-webkit-text-stroke:0.3px #141414;">Uzbekistan</span>
<span class="t" style="left:739.83px;top:1081.27px;font-size:20px;color:#141414;letter-spacing:-0.050px;-webkit-text-stroke:0.3px #141414;">2456364.12</span>
<span class="t" style="left:1040.30px;top:1081.27px;font-size:20px;color:#141414;letter-spacing:-0.200px;-webkit-text-stroke:0.3px #141414;">2021</span>
<span class="t" style="left:199.20px;top:1113.27px;font-size:20px;color:#141414;letter-spacing:-0.050px;-webkit-text-stroke:0.3px #141414;">Sri Lanka</span>
<span class="t" style="left:750.90px;top:1113.27px;font-size:20px;color:#141414;letter-spacing:-0.050px;-webkit-text-stroke:0.3px #141414;">784771.46</span>
<span class="t" style="left:1040.30px;top:1113.27px;font-size:20px;color:#141414;letter-spacing:-0.200px;-webkit-text-stroke:0.3px #141414;">2020</span>
<span class="t" style="left:199.20px;top:1145.27px;font-size:20px;color:#141414;letter-spacing:0.500px;-webkit-text-stroke:0.3px #141414;">The Gambia</span>
<span class="t" style="left:761.98px;top:1145.27px;font-size:20px;color:#141414;letter-spacing:-0.050px;-webkit-text-stroke:0.3px #141414;">398726.4</span>
<span class="t" style="left:1040.30px;top:1145.27px;font-size:20px;color:#141414;letter-spacing:-0.200px;-webkit-text-stroke:0.3px #141414;">2021</span>
<span class="t" style="left:199.20px;top:1177.27px;font-size:20px;color:#141414;letter-spacing:1.204px;-webkit-text-stroke:0.3px #141414;">Myanmar</span>
<span class="t" style="left:750.90px;top:1177.27px;font-size:20px;color:#141414;letter-spacing:-0.050px;-webkit-text-stroke:0.3px #141414;">460639.02</span>
<span class="t" style="left:1040.30px;top:1177.27px;font-size:20px;color:#141414;letter-spacing:-0.200px;-webkit-text-stroke:0.3px #141414;">2021</span>
<span class="t" style="left:199.20px;top:1208.27px;font-size:20px;color:#141414;letter-spacing:0.985px;-webkit-text-stroke:0.3px #141414;">Bhutan</span>
<span class="t" style="left:761.98px;top:1208.27px;font-size:20px;color:#141414;letter-spacing:-0.050px;-webkit-text-stroke:0.3px #141414;">357346.6</span>
<span class="t" style="left:1040.30px;top:1208.27px;font-size:20px;color:#141414;letter-spacing:-0.200px;-webkit-text-stroke:0.3px #141414;">2021</span>
<div class="a" style="left:193px;top:435px;width:897px;height:4px;background:#1f6e47;"></div>
<div class="a" style="left:1086px;top:435px;width:4px;height:37px;background:#1f6e47;"></div>
<div class="a" style="left:193px;top:468px;width:897px;height:4px;background:#1f6e47;"></div>
<svg class="a" style="left:193px;top:468px;" width="897" height="4" viewBox="0 0 897 4"><rect x="3.7" y="0.5" width="3.4" height="3" fill="#fff"/><rect x="18.0" y="0.5" width="3.4" height="3" fill="#fff"/><rect x="32.3" y="0.5" width="3.4" height="3" fill="#fff"/><rect x="46.6" y="0.5" width="3.4" height="3" fill="#fff"/><rect x="60.9" y="0.5" width="3.4" height="3" fill="#fff"/><rect x="75.2" y="0.5" width="3.4" height="3" fill="#fff"/><rect x="89.5" y="0.5" width="3.4" height="3" fill="#fff"/><rect x="103.8" y="0.5" width="3.4" height="3" fill="#fff"/><rect x="118.1" y="0.5" width="3.4" height="3" fill="#fff"/><rect x="132.4" y="0.5" width="3.4" height="3" fill="#fff"/><rect x="146.7" y="0.5" width="3.4" height="3" fill="#fff"/><rect x="161.0" y="0.5" width="3.4" height="3" fill="#fff"/><rect x="175.3" y="0.5" width="3.4" height="3" fill="#fff"/><rect x="189.6" y="0.5" width="3.4" height="3" fill="#fff"/><rect x="203.9" y="0.5" width="3.4" height="3" fill="#fff"/><rect x="218.2" y="0.5" width="3.4" height="3" fill="#fff"/><rect x="232.5" y="0.5" width="3.4" height="3" fill="#fff"/><rect x="246.8" y="0.5" width="3.4" height="3" fill="#fff"/><rect x="261.1" y="0.5" width="3.4" height="3" fill="#fff"/><rect x="275.4" y="0.5" width="3.4" height="3" fill="#fff"/><rect x="289.7" y="0.5" width="3.4" height="3" fill="#fff"/><rect x="304.0" y="0.5" width="3.4" height="3" fill="#fff"/><rect x="318.3" y="0.5" width="3.4" height="3" fill="#fff"/><rect x="332.6" y="0.5" width="3.4" height="3" fill="#fff"/><rect x="346.9" y="0.5" width="3.4" height="3" fill="#fff"/><rect x="361.2" y="0.5" width="3.4" height="3" fill="#fff"/><rect x="375.5" y="0.5" width="3.4" height="3" fill="#fff"/><rect x="389.8" y="0.5" width="3.4" height="3" fill="#fff"/><rect x="404.1" y="0.5" width="3.4" height="3" fill="#fff"/><rect x="418.4" y="0.5" width="3.4" height="3" fill="#fff"/><rect x="432.7" y="0.5" width="3.4" height="3" fill="#fff"/><rect x="447.0" y="0.5" width="3.4" height="3" fill="#fff"/><rect x="461.3" y="0.5" width="3.4" height="3" fill="#fff"/><rect x="475.6" y="0.5" width="3.4" height="3" fill="#fff"/><rect x="489.9" y="0.5" width="3.4" height="3" fill="#fff"/><rect x="504.2" y="0.5" width="3.4" height="3" fill="#fff"/><rect x="518.5" y="0.5" width="3.4" height="3" fill="#fff"/><rect x="532.8" y="0.5" width="3.4" height="3" fill="#fff"/><rect x="547.1" y="0.5" width="3.4" height="3" fill="#fff"/><rect x="561.4" y="0.5" width="3.4" height="3" fill="#fff"/><rect x="575.7" y="0.5" width="3.4" height="3" fill="#fff"/><rect x="590.0" y="0.5" width="3.4" height="3" fill="#fff"/><rect x="604.3" y="0.5" width="3.4" height="3" fill="#fff"/><rect x="618.6" y="0.5" width="3.4" height="3" fill="#fff"/><rect x="632.9" y="0.5" width="3.4" height="3" fill="#fff"/><rect x="647.2" y="0.5" width="3.4" height="3" fill="#fff"/><rect x="661.5" y="0.5" width="3.4" height="3" fill="#fff"/><rect x="675.8" y="0.5" width="3.4" height="3" fill="#fff"/><rect x="690.1" y="0.5" width="3.4" height="3" fill="#fff"/><rect x="704.4" y="0.5" width="3.4" height="3" fill="#fff"/><rect x="718.7" y="0.5" width="3.4" height="3" fill="#fff"/><rect x="733.0" y="0.5" width="3.4" height="3" fill="#fff"/><rect x="747.3" y="0.5" width="3.4" height="3" fill="#fff"/><rect x="761.6" y="0.5" width="3.4" height="3" fill="#fff"/><rect x="775.9" y="0.5" width="3.4" height="3" fill="#fff"/><rect x="790.2" y="0.5" width="3.4" height="3" fill="#fff"/><rect x="804.5" y="0.5" width="3.4" height="3" fill="#fff"/><rect x="818.8" y="0.5" width="3.4" height="3" fill="#fff"/><rect x="833.1" y="0.5" width="3.4" height="3" fill="#fff"/><rect x="847.4" y="0.5" width="3.4" height="3" fill="#fff"/><rect x="861.7" y="0.5" width="3.4" height="3" fill="#fff"/><rect x="876.0" y="0.5" width="3.4" height="3" fill="#fff"/><rect x="890.3" y="0.5" width="3.4" height="3" fill="#fff"/></svg>
<div class="a" style="left:193px;top:1230.5px;width:897px;height:4px;background:#1f6e47;"></div>
<svg class="a" style="left:193px;top:1230.5px;" width="897" height="4" viewBox="0 0 897 4"><rect x="8.6" y="0.5" width="3.4" height="3" fill="#fff"/><rect x="22.9" y="0.5" width="3.4" height="3" fill="#fff"/><rect x="37.2" y="0.5" width="3.4" height="3" fill="#fff"/><rect x="51.5" y="0.5" width="3.4" height="3" fill="#fff"/><rect x="65.8" y="0.5" width="3.4" height="3" fill="#fff"/><rect x="80.1" y="0.5" width="3.4" height="3" fill="#fff"/><rect x="94.4" y="0.5" width="3.4" height="3" fill="#fff"/><rect x="108.7" y="0.5" width="3.4" height="3" fill="#fff"/><rect x="123.0" y="0.5" width="3.4" height="3" fill="#fff"/><rect x="137.3" y="0.5" width="3.4" height="3" fill="#fff"/><rect x="151.6" y="0.5" width="3.4" height="3" fill="#fff"/><rect x="165.9" y="0.5" width="3.4" height="3" fill="#fff"/><rect x="180.2" y="0.5" width="3.4" height="3" fill="#fff"/><rect x="194.5" y="0.5" width="3.4" height="3" fill="#fff"/><rect x="208.8" y="0.5" width="3.4" height="3" fill="#fff"/><rect x="223.1" y="0.5" width="3.4" height="3" fill="#fff"/><rect x="237.4" y="0.5" width="3.4" height="3" fill="#fff"/><rect x="251.7" y="0.5" width="3.4" height="3" fill="#fff"/><rect x="266.0" y="0.5" width="3.4" height="3" fill="#fff"/><rect x="280.3" y="0.5" width="3.4" height="3" fill="#fff"/><rect x="294.6" y="0.5" width="3.4" height="3" fill="#fff"/><rect x="308.9" y="0.5" width="3.4" height="3" fill="#fff"/><rect x="323.2" y="0.5" width="3.4" height="3" fill="#fff"/><rect x="337.5" y="0.5" width="3.4" height="3" fill="#fff"/><rect x="351.8" y="0.5" width="3.4" height="3" fill="#fff"/><rect x="366.1" y="0.5" width="3.4" height="3" fill="#fff"/><rect x="380.4" y="0.5" width="3.4" height="3" fill="#fff"/><rect x="394.7" y="0.5" width="3.4" height="3" fill="#fff"/><rect x="409.0" y="0.5" width="3.4" height="3" fill="#fff"/><rect x="423.3" y="0.5" width="3.4" height="3" fill="#fff"/><rect x="437.6" y="0.5" width="3.4" height="3" fill="#fff"/><rect x="451.9" y="0.5" width="3.4" height="3" fill="#fff"/><rect x="466.2" y="0.5" width="3.4" height="3" fill="#fff"/><rect x="480.5" y="0.5" width="3.4" height="3" fill="#fff"/><rect x="494.8" y="0.5" width="3.4" height="3" fill="#fff"/><rect x="509.1" y="0.5" width="3.4" height="3" fill="#fff"/><rect x="523.4" y="0.5" width="3.4" height="3" fill="#fff"/><rect x="537.7" y="0.5" width="3.4" height="3" fill="#fff"/><rect x="552.0" y="0.5" width="3.4" height="3" fill="#fff"/><rect x="566.3" y="0.5" width="3.4" height="3" fill="#fff"/><rect x="580.6" y="0.5" width="3.4" height="3" fill="#fff"/><rect x="594.9" y="0.5" width="3.4" height="3" fill="#fff"/><rect x="609.2" y="0.5" width="3.4" height="3" fill="#fff"/><rect x="623.5" y="0.5" width="3.4" height="3" fill="#fff"/><rect x="637.8" y="0.5" width="3.4" height="3" fill="#fff"/><rect x="652.1" y="0.5" width="3.4" height="3" fill="#fff"/><rect x="666.4" y="0.5" width="3.4" height="3" fill="#fff"/><rect x="680.7" y="0.5" width="3.4" height="3" fill="#fff"/><rect x="695.0" y="0.5" width="3.4" height="3" fill="#fff"/><rect x="709.3" y="0.5" width="3.4" height="3" fill="#fff"/><rect x="723.6" y="0.5" width="3.4" height="3" fill="#fff"/><rect x="737.9" y="0.5" width="3.4" height="3" fill="#fff"/><rect x="752.2" y="0.5" width="3.4" height="3" fill="#fff"/><rect x="766.5" y="0.5" width="3.4" height="3" fill="#fff"/><rect x="780.8" y="0.5" width="3.4" height="3" fill="#fff"/><rect x="795.1" y="0.5" width="3.4" height="3" fill="#fff"/><rect x="809.4" y="0.5" width="3.4" height="3" fill="#fff"/><rect x="823.7" y="0.5" width="3.4" height="3" fill="#fff"/><rect x="838.0" y="0.5" width="3.4" height="3" fill="#fff"/><rect x="852.3" y="0.5" width="3.4" height="3" fill="#fff"/><rect x="866.6" y="0.5" width="3.4" height="3" fill="#fff"/><rect x="880.9" y="0.5" width="3.4" height="3" fill="#fff"/></svg>
<div class="a" style="left:193px;top:468px;width:4px;height:766.5px;background:#1f6e47;"></div>
<svg class="a" style="left:193px;top:468px;" width="4" height="766.5" viewBox="0 0 4 766.5"><rect x="0.5" y="10.0" width="3" height="3.4" fill="#fff"/><rect x="0.5" y="24.3" width="3" height="3.4" fill="#fff"/><rect x="0.5" y="38.6" width="3" height="3.4" fill="#fff"/><rect x="0.5" y="52.9" width="3" height="3.4" fill="#fff"/><rect x="0.5" y="67.2" width="3" height="3.4" fill="#fff"/><rect x="0.5" y="81.5" width="3" height="3.4" fill="#fff"/><rect x="0.5" y="95.8" width="3" height="3.4" fill="#fff"/><rect x="0.5" y="110.1" width="3" height="3.4" fill="#fff"/><rect x="0.5" y="124.4" width="3" height="3.4" fill="#fff"/><rect x="0.5" y="138.7" width="3" height="3.4" fill="#fff"/><rect x="0.5" y="153.0" width="3" height="3.4" fill="#fff"/><rect x="0.5" y="167.3" width="3" height="3.4" fill="#fff"/><rect x="0.5" y="181.6" width="3" height="3.4" fill="#fff"/><rect x="0.5" y="195.9" width="3" height="3.4" fill="#fff"/><rect x="0.5" y="210.2" width="3" height="3.4" fill="#fff"/><rect x="0.5" y="224.5" width="3" height="3.4" fill="#fff"/><rect x="0.5" y="238.8" width="3" height="3.4" fill="#fff"/><rect x="0.5" y="253.1" width="3" height="3.4" fill="#fff"/><rect x="0.5" y="267.4" width="3" height="3.4" fill="#fff"/><rect x="0.5" y="281.7" width="3" height="3.4" fill="#fff"/><rect x="0.5" y="296.0" width="3" height="3.4" fill="#fff"/><rect x="0.5" y="310.3" width="3" height="3.4" fill="#fff"/><rect x="0.5" y="324.6" width="3" height="3.4" fill="#fff"/><rect x="0.5" y="338.9" width="3" height="3.4" fill="#fff"/><rect x="0.5" y="353.2" width="3" height="3.4" fill="#fff"/><rect x="0.5" y="367.5" width="3" height="3.4" fill="#fff"/><rect x="0.5" y="381.8" width="3" height="3.4" fill="#fff"/><rect x="0.5" y="396.1" width="3" height="3.4" fill="#fff"/><rect x="0.5" y="410.4" width="3" height="3.4" fill="#fff"/><rect x="0.5" y="424.7" width="3" height="3.4" fill="#fff"/><rect x="0.5" y="439.0" width="3" height="3.4" fill="#fff"/><rect x="0.5" y="453.3" width="3" height="3.4" fill="#fff"/><rect x="0.5" y="467.6" width="3" height="3.4" fill="#fff"/><rect x="0.5" y="481.9" width="3" height="3.4" fill="#fff"/><rect x="0.5" y="496.2" width="3" height="3.4" fill="#fff"/><rect x="0.5" y="510.5" width="3" height="3.4" fill="#fff"/><rect x="0.5" y="524.8" width="3" height="3.4" fill="#fff"/><rect x="0.5" y="539.1" width="3" height="3.4" fill="#fff"/><rect x="0.5" y="553.4" width="3" height="3.4" fill="#fff"/><rect x="0.5" y="567.7" width="3" height="3.4" fill="#fff"/><rect x="0.5" y="582.0" width="3" height="3.4" fill="#fff"/><rect x="0.5" y="596.3" width="3" height="3.4" fill="#fff"/><rect x="0.5" y="610.6" width="3" height="3.4" fill="#fff"/><rect x="0.5" y="624.9" width="3" height="3.4" fill="#fff"/><rect x="0.5" y="639.2" width="3" height="3.4" fill="#fff"/><rect x="0.5" y="653.5" width="3" height="3.4" fill="#fff"/><rect x="0.5" y="667.8" width="3" height="3.4" fill="#fff"/><rect x="0.5" y="682.1" width="3" height="3.4" fill="#fff"/><rect x="0.5" y="696.4" width="3" height="3.4" fill="#fff"/><rect x="0.5" y="710.7" width="3" height="3.4" fill="#fff"/><rect x="0.5" y="725.0" width="3" height="3.4" fill="#fff"/><rect x="0.5" y="739.3" width="3" height="3.4" fill="#fff"/><rect x="0.5" y="753.6" width="3" height="3.4" fill="#fff"/></svg>
<div class="a" style="left:1086px;top:468px;width:4px;height:766.5px;background:#1f6e47;"></div>
<svg class="a" style="left:1086px;top:468px;" width="4" height="766.5" viewBox="0 0 4 766.5"><rect x="0.5" y="10.0" width="3" height="3.4" fill="#fff"/><rect x="0.5" y="24.3" width="3" height="3.4" fill="#fff"/><rect x="0.5" y="38.6" width="3" height="3.4" fill="#fff"/><rect x="0.5" y="52.9" width="3" height="3.4" fill="#fff"/><rect x="0.5" y="67.2" width="3" height="3.4" fill="#fff"/><rect x="0.5" y="81.5" width="3" height="3.4" fill="#fff"/><rect x="0.5" y="95.8" width="3" height="3.4" fill="#fff"/><rect x="0.5" y="110.1" width="3" height="3.4" fill="#fff"/><rect x="0.5" y="124.4" width="3" height="3.4" fill="#fff"/><rect x="0.5" y="138.7" width="3" height="3.4" fill="#fff"/><rect x="0.5" y="153.0" width="3" height="3.4" fill="#fff"/><rect x="0.5" y="167.3" width="3" height="3.4" fill="#fff"/><rect x="0.5" y="181.6" width="3" height="3.4" fill="#fff"/><rect x="0.5" y="195.9" width="3" height="3.4" fill="#fff"/><rect x="0.5" y="210.2" width="3" height="3.4" fill="#fff"/><rect x="0.5" y="224.5" width="3" height="3.4" fill="#fff"/><rect x="0.5" y="238.8" width="3" height="3.4" fill="#fff"/><rect x="0.5" y="253.1" width="3" height="3.4" fill="#fff"/><rect x="0.5" y="267.4" width="3" height="3.4" fill="#fff"/><rect x="0.5" y="281.7" width="3" height="3.4" fill="#fff"/><rect x="0.5" y="296.0" width="3" height="3.4" fill="#fff"/><rect x="0.5" y="310.3" width="3" height="3.4" fill="#fff"/><rect x="0.5" y="324.6" width="3" height="3.4" fill="#fff"/><rect x="0.5" y="338.9" width="3" height="3.4" fill="#fff"/><rect x="0.5" y="353.2" width="3" height="3.4" fill="#fff"/><rect x="0.5" y="367.5" width="3" height="3.4" fill="#fff"/><rect x="0.5" y="381.8" width="3" height="3.4" fill="#fff"/><rect x="0.5" y="396.1" width="3" height="3.4" fill="#fff"/><rect x="0.5" y="410.4" width="3" height="3.4" fill="#fff"/><rect x="0.5" y="424.7" width="3" height="3.4" fill="#fff"/><rect x="0.5" y="439.0" width="3" height="3.4" fill="#fff"/><rect x="0.5" y="453.3" width="3" height="3.4" fill="#fff"/><rect x="0.5" y="467.6" width="3" height="3.4" fill="#fff"/><rect x="0.5" y="481.9" width="3" height="3.4" fill="#fff"/><rect x="0.5" y="496.2" width="3" height="3.4" fill="#fff"/><rect x="0.5" y="510.5" width="3" height="3.4" fill="#fff"/><rect x="0.5" y="524.8" width="3" height="3.4" fill="#fff"/><rect x="0.5" y="539.1" width="3" height="3.4" fill="#fff"/><rect x="0.5" y="553.4" width="3" height="3.4" fill="#fff"/><rect x="0.5" y="567.7" width="3" height="3.4" fill="#fff"/><rect x="0.5" y="582.0" width="3" height="3.4" fill="#fff"/><rect x="0.5" y="596.3" width="3" height="3.4" fill="#fff"/><rect x="0.5" y="610.6" width="3" height="3.4" fill="#fff"/><rect x="0.5" y="624.9" width="3" height="3.4" fill="#fff"/><rect x="0.5" y="639.2" width="3" height="3.4" fill="#fff"/><rect x="0.5" y="653.5" width="3" height="3.4" fill="#fff"/><rect x="0.5" y="667.8" width="3" height="3.4" fill="#fff"/><rect x="0.5" y="682.1" width="3" height="3.4" fill="#fff"/><rect x="0.5" y="696.4" width="3" height="3.4" fill="#fff"/><rect x="0.5" y="710.7" width="3" height="3.4" fill="#fff"/><rect x="0.5" y="725.0" width="3" height="3.4" fill="#fff"/><rect x="0.5" y="739.3" width="3" height="3.4" fill="#fff"/><rect x="0.5" y="753.6" width="3" height="3.4" fill="#fff"/></svg>
<div class="a" style="left:27px;top:1308px;width:1994px;height:4px;background:#e3e3e3;"></div>
<div class="a" style="left:209px;top:1308.5px;width:85px;height:4px;background:#fbfbfb;border-radius:3px 3px 0 0;"></div>
<svg class="a" style="left:0;top:0;" width="2048" height="1338" viewBox="0 0 2048 1338"><defs><linearGradient id="xg" x1="0" y1="0" x2="0" y2="1"><stop offset="0" stop-color="#21a366"/><stop offset="0.35" stop-color="#21a366"/><stop offset="0.36" stop-color="#149a57"/><stop offset="0.68" stop-color="#107c41"/><stop offset="0.69" stop-color="#185c37"/><stop offset="1" stop-color="#185c37"/></linearGradient></defs><rect x="56.8" y="51.8" width="20.4" height="25.4" rx="1.6" fill="url(#xg)"/><rect x="67" y="51.8" width="10.2" height="8.6" fill="#33c481"/><rect x="52" y="56.8" width="16.2" height="16.2" rx="1.5" fill="#107c41"/><path d="M56.3 60.3 L63.9 69.5 M63.9 60.3 L56.3 69.5" stroke="#fff" stroke-width="2.3" fill="none"/><path d="M103.6 53.2 H125.8 V63.5 M103.6 53.2 V71.5 L107.5 75 H112" fill="none" stroke="#c2c2c2" stroke-width="1.6" /><path d="M108.5 53.5 V62 H122 V53.5 M118.6 54 V58.5" fill="none" stroke="#c2c2c2" stroke-width="1.6" /><path d="M110.5 67.5 V74.5" fill="none" stroke="#c2c2c2" stroke-width="1.6" /><path d="M115.5 68.5 A6 6 0 0 1 126 66 M126.3 61.8 V66.3 H121.8 M126.5 71.5 A6 6 0 0 1 116 74 M115.7 78 V73.7 H120.2" fill="none" stroke="#c2c2c2" stroke-width="1.7" /><path d="M151.4 52.4 V62.4 H161.2" fill="none" stroke="#c2c2c2" stroke-width="1.7" /><path d="M152 61.8 L159.5 55.2 Q165.5 50.3 170.3 55.6 Q174.6 61.2 169 67.3 L159.3 77" fill="none" stroke="#c2c2c2" stroke-width="1.7" /><path d="M184.3 62.2 L188.15 66 L192 62.2" fill="none" stroke="#c2c2c2" stroke-width="1.6" stroke-linecap="round" stroke-linejoin="round"/><path d="M234 52.4 V62.4 H224.2" fill="none" stroke="#c2c2c2" stroke-width="1.7" /><path d="M233.4 61.8 L225.9 55.2 Q219.9 50.3 215.1 55.6 Q210.8 61.2 216.4 67.3 L226.1 77" fill="none" stroke="#c2c2c2" stroke-width="1.7" /><path d="M245.5 62.2 L249.5 66 L253.5 62.2" fill="none" stroke="#c2c2c2" stroke-width="1.6" stroke-linecap="round" stroke-linejoin="round"/><path d="M279.8 60.2 H290.2" fill="none" stroke="#c2c2c2" stroke-width="1.6" /><path d="M280.5 65.2 L285.0 69.2 L289.5 65.2" fill="none" stroke="#c2c2c2" stroke-width="1.6" stroke-linecap="round" stroke-linejoin="round"/><circle cx="1055.50" cy="60.80" r="6.30" fill="none" stroke="#c0c0c0" stroke-width="1.6"/><path d="M1051 65.5 L1041.8 75.2" fill="none" stroke="#c0c0c0" stroke-width="1.7" stroke-linecap="round"/><rect x="87.30" y="165.00" width="44.00" height="44.00" fill="#f2f2f2" stroke="#b3b3b3" stroke-width="1.5" /><rect x="92.30" y="170.30" width="8.40" height="8.20" fill="#dcdcdc" stroke="#b3b3b3" stroke-width="1.5" /><rect x="104.90" y="170.30" width="21.40" height="8.20" fill="#dcdcdc" stroke="#b3b3b3" stroke-width="1.5" /><rect x="92.30" y="183.30" width="8.40" height="20.50" fill="#dcdcdc" stroke="#b3b3b3" stroke-width="1.5" /><path d="M121.2 184 V199 H107.5 M116.5 188.6 L121.2 183.6 L125.9 188.6 M112.3 194.3 L107.3 199 L112.3 203.7" fill="none" stroke="#b3b3b3" stroke-width="1.5" /><path d="M261.7 182 V165 H217.7 V209 H252.7" fill="none" stroke="#b3b3b3" stroke-width="1.5" /><path d="M218.39999999999998 165.7 H261.0 V191 L253.7 208.3 H218.39999999999998 Z" fill="#f2f2f2"/><path d="M261.7 182 V165 H217.7 V209 H252.7" fill="none" stroke="#b3b3b3" stroke-width="1.5" /><rect x="222.70" y="170.30" width="8.40" height="8.20" fill="#dcdcdc" stroke="#b3b3b3" stroke-width="1.5" /><rect x="235.30" y="170.30" width="21.40" height="8.20" fill="#dcdcdc" stroke="#b3b3b3" stroke-width="1.5" /><rect x="222.70" y="183.30" width="8.40" height="20.50" fill="#dcdcdc" stroke="#b3b3b3" stroke-width="1.5" /><g transform="translate(0 0)"><path d="M250.7 193.2 Q250.8 186.7 257.6 186.6 Q264.5 186.9 264.3 192.7 Q264.1 196.1 260 198.9 Q255.9 201.7 255.9 206.4" fill="none" stroke="#b9b9b9" stroke-width="2" stroke-linecap="round"/><circle cx="255.9" cy="210.9" r="1.5" fill="#b9b9b9"/></g><rect x="329.20" y="165.30" width="43.40" height="43.20" fill="#f2f2f2" stroke="#b3b3b3" stroke-width="1.5" /><path d="M329.2 174.6 H372.6 M329.2 186.5 H372.6 M329.2 197.5 H372.6 M343.6 174.6 V208.5 M357.8 174.6 V208.5" fill="none" stroke="#b3b3b3" stroke-width="1.5" /><path d="M333.0 168.2 H339.79999999999995 L336.4 172 Z" fill="#b3b3b3"/><path d="M347.3 168.2 H354.09999999999997 L350.7 172 Z" fill="#b3b3b3"/><path d="M361.6 168.2 H368.4 L365 172 Z" fill="#b3b3b3"/><rect x="432.30" y="170.00" width="43.70" height="32.30" fill="#f2f2f2" stroke="#b3b3b3" stroke-width="1.5" /><path d="M433 190 L444.4 179 L467.5 201.6 H433 Z" fill="#dcdcdc"/><path d="M458 193 L464.3 187 L475.3 197.7 V201.6 H467 Z" fill="#dcdcdc"/><path d="M432.5 190.5 L444.4 179 L468 202 M457.8 192.5 L464.3 186.7 L475.8 198" fill="none" stroke="#b3b3b3" stroke-width="1.5" /><circle cx="467.00" cy="179.00" r="2.40" fill="#b3b3b3" stroke="none" stroke-width="0"/><path d="M449.6 252.6 L453.5 256.4 L457.4 252.6" fill="none" stroke="#bcbcbc" stroke-width="1.5" stroke-linecap="round" stroke-linejoin="round"/><rect x="508.80" y="164.00" width="16.40" height="16.20" fill="#dcdcdc" stroke="#b3b3b3" stroke-width="1.5" /><circle cx="525.10" cy="179.90" r="10.00" fill="#fff" stroke="none" stroke-width="0"/><circle cx="525.10" cy="179.90" r="7.90" fill="#f2f2f2" stroke="#b3b3b3" stroke-width="1.7"/><path d="M608.3 174.8 L612.65 178.8 L617 174.8" fill="none" stroke="#bcbcbc" stroke-width="1.5" stroke-linecap="round" stroke-linejoin="round"/><path d="M508.4 210.4 Q509 214 512.8 214 H518.6 Q517.4 208.6 520 206.4 Q523 204.2 526.2 206.4 L530.4 208.4 L527 211.2 Q526.6 214 523.4 215.6 Q519.5 222.4 513.2 221.2 Q508.4 218.4 508.4 210.4 Z" fill="#dcdcdc" stroke="#b3b3b3" stroke-width="1.4" stroke-linejoin="round"/><path d="M530 216.3 Q522 215.5 518.5 219.5 Q515.5 224 519 227.5 Q523.5 230.5 527.5 227.5 Q531.5 223.5 530 216.3 Z" fill="#fff" stroke="#fff" stroke-width="4" /><path d="M530 216.3 Q522 215.5 518.5 219.5 Q515.5 224 519 227.5 Q523.5 230.5 527.5 227.5 Q531.5 223.5 530 216.3 Z" fill="#f2f2f2" stroke="#b3b3b3" stroke-width="1.4" stroke-linejoin="round"/><path d="M515 229.4 L524.6 221" fill="none" stroke="#b3b3b3" stroke-width="1.4" stroke-linecap="round"/><path d="M520.2 247.6 L530 252.4 V264.2 L520.2 269.2 L510.3 264.2 V252.4 Z" fill="#f2f2f2" stroke="#b3b3b3" stroke-width="1.5" /><path d="M510.5 252.5 L520.2 257.3 L529.8 252.5 M520.2 257.3 V269" fill="none" stroke="#b3b3b3" stroke-width="1.5" /><path d="M660.3 257.6 L664.75 261.6 L669.2 257.6" fill="none" stroke="#bcbcbc" stroke-width="1.5" stroke-linecap="round" stroke-linejoin="round"/><path d="M689.5 167.2 H707 L712.6 173 H702 L696 179 H690 L696.3 173 Z" fill="#dcdcdc" stroke="#b3b3b3" stroke-width="1.2"/><rect x="699.30" y="174.60" width="15.50" height="10.00" fill="#f2f2f2" stroke="#b3b3b3" stroke-width="1.5" /><path d="M702.5 178 H704 M706 178 H712 M702.5 181.4 H704 M706 181.4 H712" fill="none" stroke="#b3b3b3" stroke-width="1.2" /><rect x="693.4" y="205.6" width="17.8" height="15" fill="#f2f2f2" stroke="#b3b3b3" stroke-width="1.4" stroke-dasharray="4 2.6"/><path d="M711 212 V222" fill="none" stroke="#b3b3b3" stroke-width="1.4" stroke-dasharray="3 2.4"/><rect x="690.00" y="219.30" width="15.20" height="10.30" fill="#dcdcdc" stroke="#b3b3b3" stroke-width="1.5" /><circle cx="697.60" cy="224.40" r="2.50" fill="#f2f2f2" stroke="#b3b3b3" stroke-width="1.4"/><path d="M707.5 225.8 H714.6 M711.1 222.2 V229.4" fill="none" stroke="#b3b3b3" stroke-width="1.3" /><path d="M794.3 215.8 L798.55 220 L802.8 215.8" fill="none" stroke="#bcbcbc" stroke-width="1.5" stroke-linecap="round" stroke-linejoin="round"/><rect x="890.40" y="165.60" width="13.10" height="43.20" fill="#dcdcdc" stroke="#b3b3b3" stroke-width="1.5" /><rect x="903.50" y="181.60" width="11.30" height="27.20" fill="#f2f2f2" stroke="#b3b3b3" stroke-width="1.5" /><g transform="translate(668.6 -20.8)"><path d="M250.7 193.2 Q250.8 186.7 257.6 186.6 Q264.5 186.9 264.3 192.7 Q264.1 196.1 260 198.9 Q255.9 201.7 255.9 206.4" fill="none" stroke="#b9b9b9" stroke-width="2" stroke-linecap="round"/><circle cx="255.9" cy="210.9" r="1.5" fill="#b9b9b9"/></g><rect x="988.90" y="175.50" width="8.50" height="12.20" fill="#dcdcdc" stroke="#b3b3b3" stroke-width="1.5" /><rect x="1005.20" y="168.60" width="8.10" height="19.10" fill="#dcdcdc" stroke="#b3b3b3" stroke-width="1.5" /><rect x="997.40" y="164.10" width="7.80" height="23.60" fill="#f2f2f2" stroke="#b3b3b3" stroke-width="1.5" /><rect x="1056.10" y="164.00" width="23.90" height="23.90" fill="#f2f2f2" stroke="#b3b3b3" stroke-width="1.5" /><rect x="1056.10" y="164.00" width="10.90" height="23.90" fill="#dcdcdc" stroke="#b3b3b3" stroke-width="1.5" /><rect x="1067.00" y="178.00" width="13.00" height="9.90" fill="#dcdcdc" stroke="#b3b3b3" stroke-width="1.5" /><path d="M1122.3 187.8 V173.8 H1129 V164 H1140.5 V178.3 H1146.7 V187.8 H1143 V178.3 H1135.4 V164 M1132.8 164 V173.8 H1126.4 V187.8 H1122.3" fill="none" stroke="#b3b3b3" stroke-width="1.4" /><rect x="1129.7" y="164.7" width="2.4" height="8.4" fill="#dcdcdc"/><rect x="1123" y="174.5" width="2.7" height="12.6" fill="#dcdcdc"/><rect x="1143.7" y="179" width="2.3" height="8.1" fill="#dcdcdc"/><path d="M989.8 218.7 L993.2 209.3 L1002.7 223.4 L1012.2 209.3 M989.8 227.1 L1004.2 206 L1012.2 218.7" fill="none" stroke="#b3b3b3" stroke-width="1.3" /><rect x="988.5" y="217.4" width="2.6" height="2.6" fill="#a9a9a9"/><rect x="991.9" y="208.0" width="2.6" height="2.6" fill="#a9a9a9"/><rect x="1001.4" y="222.1" width="2.6" height="2.6" fill="#a9a9a9"/><rect x="1010.9" y="208.0" width="2.6" height="2.6" fill="#a9a9a9"/><rect x="988.5" y="225.8" width="2.6" height="2.6" fill="#a9a9a9"/><rect x="1002.9" y="204.7" width="2.6" height="2.6" fill="#a9a9a9"/><rect x="1010.9" y="217.4" width="2.6" height="2.6" fill="#a9a9a9"/><rect x="1057.20" y="215.20" width="4.80" height="14.20" fill="#dcdcdc" stroke="#b3b3b3" stroke-width="1.5" /><rect x="1062.00" y="205.50" width="5.40" height="23.90" fill="#dcdcdc" stroke="#b3b3b3" stroke-width="1.5" /><rect x="1067.40" y="211.70" width="4.60" height="17.70" fill="#dcdcdc" stroke="#b3b3b3" stroke-width="1.5" /><rect x="1072.00" y="219.60" width="4.90" height="9.80" fill="#dcdcdc" stroke="#b3b3b3" stroke-width="1.5" /><rect x="1122.20" y="213.30" width="8.20" height="16.10" fill="#dcdcdc" stroke="#b3b3b3" stroke-width="1.5" /><rect x="1130.40" y="218.00" width="8.30" height="11.40" fill="#f2f2f2" stroke="#b3b3b3" stroke-width="1.5" /><rect x="1138.70" y="223.00" width="8.00" height="6.40" fill="#dcdcdc" stroke="#b3b3b3" stroke-width="1.5" /><path d="M1126 206.8 L1135.3 211.2 L1143.9 216.6" fill="none" stroke="#b3b3b3" stroke-width="1.3" /><rect x="1124.0" y="204.8" width="4" height="4" fill="#dcdcdc" stroke="#a9a9a9" stroke-width="1.1"/><rect x="1133.3" y="209.2" width="4" height="4" fill="#dcdcdc" stroke="#a9a9a9" stroke-width="1.1"/><rect x="1141.9" y="214.6" width="4" height="4" fill="#dcdcdc" stroke="#a9a9a9" stroke-width="1.1"/><path d="M1002.5 247.7 A12 12 0 1 1 989.5 260.5 H1002.5 Z" fill="#dcdcdc" stroke="#b3b3b3" stroke-width="1.4"/><path d="M999.9 257.6 H989.2 A11.5 11.5 0 0 1 999.9 246.6 Z" fill="#dcdcdc" stroke="#b3b3b3" stroke-width="1.4"/><path d="M1056.2 246.4 V270.7 H1080.4" fill="none" stroke="#b3b3b3" stroke-width="1.5" /><rect x="1074.4" y="247.8" width="3" height="3" fill="#9a9a9a"/><rect x="1060.0" y="263.7" width="3" height="3" fill="#9a9a9a"/><rect x="1060.0" y="252.5" width="3" height="3" fill="#d2d2d2"/><rect x="1066.4" y="257.1" width="3" height="3" fill="#d2d2d2"/><rect x="1074.4" y="262.0" width="3" height="3" fill="#d2d2d2"/><path d="M1022.9 174.9 L1027.35 178.7 L1031.8 174.9" fill="none" stroke="#bcbcbc" stroke-width="1.5" stroke-linecap="round" stroke-linejoin="round"/><path d="M1022.9 216.2 L1027.35 220 L1031.8 216.2" fill="none" stroke="#bcbcbc" stroke-width="1.5" stroke-linecap="round" stroke-linejoin="round"/><path d="M1089.7 174.9 L1094.15 178.7 L1098.6000000000001 174.9" fill="none" stroke="#bcbcbc" stroke-width="1.5" stroke-linecap="round" stroke-linejoin="round"/><path d="M1089.7 216.2 L1094.15 220 L1098.6000000000001 216.2" fill="none" stroke="#bcbcbc" stroke-width="1.5" stroke-linecap="round" stroke-linejoin="round"/><path d="M1156.4 174.9 L1160.8500000000001 178.7 L1165.3000000000002 174.9" fill="none" stroke="#bcbcbc" stroke-width="1.5" stroke-linecap="round" stroke-linejoin="round"/><path d="M1156.4 216.2 L1160.8500000000001 220 L1165.3000000000002 216.2" fill="none" stroke="#bcbcbc" stroke-width="1.5" stroke-linecap="round" stroke-linejoin="round"/><path d="M1022.9 257.2 L1027.35 261 L1031.8 257.2" fill="none" stroke="#bcbcbc" stroke-width="1.5" stroke-linecap="round" stroke-linejoin="round"/><path d="M1089.7 257.2 L1094.15 261 L1098.6000000000001 257.2" fill="none" stroke="#bcbcbc" stroke-width="1.5" stroke-linecap="round" stroke-linejoin="round"/><circle cx="1217.60" cy="183.70" r="14.60" fill="#f2f2f2" stroke="#b3b3b3" stroke-width="1.6"/><path d="M1208 176 Q1212 173 1214.5 175.5 Q1213 181 1209.5 184 Q1205.5 186 1205 182 Q1205.5 178 1208 176 Z M1221 172.5 Q1228 171 1231.5 180 Q1230 186 1226 184.5 Q1221 182.5 1219.5 178 Q1219 174.5 1221 172.5 Z M1212.5 190 Q1218 187 1224 189.5 Q1224.5 195 1220 197.6 Q1215.5 196.5 1212.5 190 Z" fill="#bbbbbb"/><path d="M1217.2 163.8 A20.2 20.2 0 1 0 1232.8 197.2" fill="none" stroke="#b3b3b3" stroke-width="1.6" /><path d="M1217 203.8 V208.2 M1203.3 208.3 H1230" fill="none" stroke="#b3b3b3" stroke-width="1.5" /><path d="M1210.9 252.6 L1215.35 256.4 L1219.8 252.6" fill="none" stroke="#bcbcbc" stroke-width="1.5" stroke-linecap="round" stroke-linejoin="round"/><path d="M1305 208.6 H1283.3 V165.3 H1326.6 V192" fill="none" stroke="#b3b3b3" stroke-width="1.5" /><path d="M1284 166 H1325.9 V208 H1284 Z" fill="#f2f2f2"/><path d="M1305 208.6 H1283.3 V165.3 H1326.6 V192" fill="none" stroke="#b3b3b3" stroke-width="1.5" /><rect x="1288.00" y="170.30" width="8.50" height="7.90" fill="#dcdcdc" stroke="#b3b3b3" stroke-width="1.5" /><rect x="1300.30" y="170.30" width="21.90" height="7.90" fill="#dcdcdc" stroke="#b3b3b3" stroke-width="1.5" /><rect x="1288.00" y="183.00" width="8.50" height="20.50" fill="#dcdcdc" stroke="#b3b3b3" stroke-width="1.5" /><rect x="1305.50" y="199.00" width="7.80" height="12.60" fill="#dcdcdc" stroke="#b3b3b3" stroke-width="1.5" /><rect x="1321.50" y="192.60" width="8.40" height="19.00" fill="#dcdcdc" stroke="#b3b3b3" stroke-width="1.5" /><rect x="1313.30" y="187.80" width="8.20" height="23.80" fill="#fafafa" stroke="#b3b3b3" stroke-width="1.5" /><path d="M1341.3 254.3 L1345.55 258.3 L1349.8 254.3" fill="none" stroke="#bcbcbc" stroke-width="1.5" stroke-linecap="round" stroke-linejoin="round"/><path d="M1400.8999999999999 168.3 V205.9 M1393.8 175.3 H1438.2 M1393.8 199 H1438.2" fill="none" stroke="#b3b3b3" stroke-width="1.5" /><path d="M1401 187.8 L1407 194 L1415.2 181.7 L1423 194 L1433 180.3 L1438 188.5" fill="none" stroke="#c0c0c0" stroke-width="1.3" /><path d="M1483.6999999999998 168.3 V205.9 M1476.6 175.3 H1521.0 M1476.6 199 H1521.0" fill="none" stroke="#b3b3b3" stroke-width="1.5" /><rect x="1488.20" y="186.40" width="5.40" height="9.40" fill="#dcdcdc" stroke="#b3b3b3" stroke-width="1.2" /><rect x="1497.70" y="179.80" width="5.40" height="16.00" fill="#dcdcdc" stroke="#b3b3b3" stroke-width="1.2" /><rect x="1507.10" y="183.00" width="5.50" height="12.80" fill="#dcdcdc" stroke="#b3b3b3" stroke-width="1.2" /><path d="M1580.8 168.3 V205.9 M1573.7 175.3 H1618.1000000000001 M1573.7 199 H1618.1000000000001" fill="none" stroke="#b3b3b3" stroke-width="1.5" /><rect x="1585.30" y="179.80" width="3.50" height="6.60" fill="#dcdcdc" stroke="#b3b3b3" stroke-width="1.2" /><rect x="1591.60" y="179.80" width="3.60" height="6.60" fill="#dcdcdc" stroke="#b3b3b3" stroke-width="1.2" /><rect x="1597.80" y="187.70" width="3.70" height="6.80" fill="#dcdcdc" stroke="#b3b3b3" stroke-width="1.2" /><rect x="1604.10" y="187.70" width="3.80" height="6.80" fill="#dcdcdc" stroke="#b3b3b3" stroke-width="1.2" /><rect x="1610.50" y="179.80" width="3.90" height="6.60" fill="#dcdcdc" stroke="#b3b3b3" stroke-width="1.2" /><rect x="1711.00" y="165.60" width="43.20" height="43.20" fill="#f2f2f2" stroke="#b3b3b3" stroke-width="1.5" /><rect x="1711.00" y="165.60" width="43.20" height="6.40" fill="#dcdcdc" stroke="#b3b3b3" stroke-width="1.5" /><rect x="1717.60" y="178.60" width="30.20" height="7.60" fill="#dcdcdc" stroke="#b3b3b3" stroke-width="1.5" /><rect x="1717.60" y="193.00" width="22.40" height="7.30" fill="#dcdcdc" stroke="#b3b3b3" stroke-width="1.5" /><path d="M1731.5 187 H1760 V213 H1738 V200 Z" fill="#fff"/><path d="M1734.2 189.4 H1757.5 V192 L1749.2 200.5 V211.5 H1743.0 V200.5 L1734.2 192 Z" fill="#f2f2f2" stroke="#b3b3b3" stroke-width="1.5" stroke-linejoin="round"/><rect x="1820.70" y="173.50" width="43.00" height="27.40" fill="#f2f2f2" stroke="#b3b3b3" stroke-width="1.5" /><rect x="1820.70" y="173.50" width="43.00" height="6.40" fill="#dcdcdc" stroke="#b3b3b3" stroke-width="1.5" /><rect x="1825.50" y="186.40" width="7.70" height="7.70" fill="#dcdcdc" stroke="#b3b3b3" stroke-width="1.5" /><rect x="1838.00" y="186.40" width="7.80" height="7.70" fill="#dcdcdc" stroke="#b3b3b3" stroke-width="1.5" /><path d="M1850 186.5 H1859" fill="none" stroke="#cfcfcf" stroke-width="1.2" /><path d="M1841.5 187 H1870 V213 H1848 V203 H1846 Z" fill="#fff"/><path d="M1844.1 189.4 H1867.3999999999999 V192 L1859.1 200.5 V211.5 H1852.8999999999999 V200.5 L1844.1 192 Z" fill="#f2f2f2" stroke="#b3b3b3" stroke-width="1.5" stroke-linejoin="round"/><rect x="1923.2" y="171.8" width="33.8" height="19.7" rx="9.8" fill="none" stroke="#b3b3b3" stroke-width="1.7"/><rect x="1934.6" y="182.7" width="32.6" height="19.7" rx="9.8" fill="none" stroke="#b3b3b3" stroke-width="1.7"/><rect x="1936.3" y="190.2" width="3.8" height="2.8" fill="#fff"/><rect x="1951.9" y="181.4" width="3.8" height="2.8" fill="#fff"/><path d="M146.3 252.9 L150.25 256.9 L154.2 252.9" fill="none" stroke="#bcbcbc" stroke-width="1.5" stroke-linecap="round" stroke-linejoin="round"/><path d="M176.5 341.5 L184 349 L191.5 341.5" fill="none" stroke="#404040" stroke-width="1.6" stroke-linecap="round" stroke-linejoin="round"/><circle cx="217.2" cy="337" r="1.5" fill="#444"/><circle cx="217.2" cy="343.2" r="1.5" fill="#444"/><circle cx="217.2" cy="349.4" r="1.5" fill="#444"/><path d="M245 334.3 L262.6 351.8 M262.6 334.3 L245 351.8" fill="none" stroke="#cdcdcd" stroke-width="1.6" /><path d="M280 343.5 L287.5 351 L304.2 334.5" fill="none" stroke="#cdcdcd" stroke-width="1.6" /></svg>
<div class="a" style="left:1141.5px;top:275px;width:629.0px;height:399.5px;background:#f0f0f0;border:1.5px solid #6f6f6f;box-shadow:0 4px 26px 4px rgba(0,0,0,0.36),0 0 10px rgba(0,0,0,0.14);"></div>
<div class="a" style="left:1143.0px;top:276.5px;width:626.0px;height:47.5px;background:#ffffff;"></div>
<span class="t" style="left:1156.00px;top:291.46px;font-size:18px;color:#1b1b1b;letter-spacing:0.269px;-webkit-text-stroke:0.22px #1b1b1b;">Tabla dinámica desde la tabla o el rango</span>
<span class="t" style="left:1657.00px;top:288.92px;font-size:21px;color:#1b1b1b;-webkit-text-stroke:0.35px #1b1b1b;">?</span>
<svg class="a" style="left:1723px;top:289px;" width="19" height="19" viewBox="0 0 19 19"><path d="M1.5 1.5 L17.5 17.5 M17.5 1.5 L1.5 17.5" stroke="#1b1b1b" stroke-width="1.6" fill="none"/></svg>
<span class="t" style="left:1154.50px;top:338.30px;font-size:17.6px;color:#1b1b1b;letter-spacing:0.330px;-webkit-text-stroke:0.22px #1b1b1b;">Seleccionar una tabla o rango</span>
<div class="a" style="left:1408px;top:345px;width:352px;height:1px;background:#dcdcdc;"></div>
<span class="t" style="left:1168.00px;top:375.80px;font-size:17.6px;color:#1b1b1b;letter-spacing:0.558px;-webkit-text-stroke:0.22px #1b1b1b;">Tabla o rango:</span>
<div class="a" style="left:1168px;top:392.5px;width:9px;height:1.3px;background:#1b1b1b;"></div>
<div class="a" style="left:1303px;top:367px;width:457px;height:33.5px;background:#ffffff;border:1.5px solid #8c8c8c;"></div>
<span class="t" style="left:1310.00px;top:375.80px;font-size:17.6px;color:#1b1b1b;letter-spacing:0.200px;-webkit-text-stroke:0.22px #1b1b1b;">Tabla3</span>
<div class="a" style="left:1725px;top:367px;width:34.5px;height:33.5px;background:#f3f3f3;border:2px solid #b0b0b0;"></div>
<svg class="a" style="left:1733px;top:375.5px;" width="15" height="16" viewBox="0 0 15 16"><path d="M7.5 0.5 L13.6 7 L9.2 7 L9.2 11.5 L5.8 11.5 L5.8 7 L1.4 7 Z" fill="#111"/><rect x="1" y="13.3" width="13" height="1.8" fill="#111"/></svg>
<span class="t" style="left:1154.50px;top:415.80px;font-size:17.6px;color:#1b1b1b;letter-spacing:0.259px;-webkit-text-stroke:0.22px #1b1b1b;">Elija dónde desea colocar la tabla dinámica</span>
<div class="a" style="left:1514px;top:423px;width:246px;height:1px;background:#dcdcdc;"></div>
<svg class="a" style="left:1166px;top:450.3px;" width="22" height="22" viewBox="0 0 22 22"><circle cx="11" cy="11" r="9.3" fill="#fff" stroke="#333" stroke-width="1.5"/><circle cx="11" cy="11" r="5.3" fill="#333"/></svg>
<span class="t" style="left:1198.75px;top:454.55px;font-size:17.6px;color:#1b1b1b;letter-spacing:0.269px;-webkit-text-stroke:0.22px #1b1b1b;">Nueva hoja de cálculo</span>
<div class="a" style="left:1199px;top:471px;width:12px;height:1.3px;background:#1b1b1b;"></div>
<svg class="a" style="left:1166px;top:480px;" width="22" height="22" viewBox="0 0 22 22"><circle cx="11" cy="11" r="9.3" fill="#fff" stroke="#333" stroke-width="1.5"/></svg>
<span class="t" style="left:1198.75px;top:484.55px;font-size:17.6px;color:#1b1b1b;letter-spacing:0.260px;-webkit-text-stroke:0.22px #1b1b1b;">Hoja de cálculo existente</span>
<div class="a" style="left:1199px;top:501px;width:12px;height:1.3px;background:#1b1b1b;"></div>
<span class="t" style="left:1168.75px;top:519.55px;font-size:17.6px;color:#8d8d8d;letter-spacing:0.306px;-webkit-text-stroke:0.22px #8d8d8d;">Ubicación:</span>
<div class="a" style="left:1169px;top:536px;width:12px;height:1.3px;background:#8d8d8d;"></div>
<div class="a" style="left:1270px;top:510px;width:490px;height:33px;background:#ffffff;border:1.5px solid #8c8c8c;"></div>
<div class="a" style="left:1725px;top:509.5px;width:34.5px;height:33.5px;background:#f3f3f3;border:2px solid #b0b0b0;"></div>
<svg class="a" style="left:1733px;top:518.0px;" width="15" height="16" viewBox="0 0 15 16"><path d="M7.5 0.5 L13.6 7 L9.2 7 L9.2 11.5 L5.8 11.5 L5.8 7 L1.4 7 Z" fill="#111"/><rect x="1" y="13.3" width="13" height="1.8" fill="#111"/></svg>
<span class="t" style="left:1154.50px;top:558.80px;font-size:17.6px;color:#1b1b1b;letter-spacing:0.128px;-webkit-text-stroke:0.22px #1b1b1b;">Elija si quiere analizar varias tablas</span>
<div class="a" style="left:1444px;top:566px;width:316px;height:1px;background:#dcdcdc;"></div>
<div class="a" style="left:1166.5px;top:590px;width:21px;height:20.5px;background:#ffffff;border:1.5px solid #333;"></div>
<span class="t" style="left:1198.75px;top:592.05px;font-size:17.6px;color:#1b1b1b;letter-spacing:0.395px;-webkit-text-stroke:0.22px #1b1b1b;">Agregar estos datos al Modelo de datos</span>
<div class="a" style="left:1386px;top:608.5px;width:15px;height:1.3px;background:#1b1b1b;"></div>
<div class="a" style="left:1508px;top:627.5px;width:116.5px;height:33.5px;background:#e5f1fb;border:2px solid #2b88d8;"></div>
<span class="t" style="left:1535.50px;top:636.30px;font-size:17.6px;color:#1b1b1b;letter-spacing:0.125px;-webkit-text-stroke:0.22px #1b1b1b;">Aceptar</span>
<div class="a" style="left:1641px;top:627.5px;width:116.5px;height:33.5px;background:#e1e1e1;border:1px solid #adadad;"></div>
<span class="t" style="left:1665.00px;top:636.30px;font-size:17.6px;color:#1b1b1b;letter-spacing:-0.250px;-webkit-text-stroke:0.22px #1b1b1b;">Cancelar</span>
<svg class="a" style="left:1753.5px;top:657.5px;" width="13" height="13" viewBox="0 0 13 13"><rect x="10" y="0" width="2.5" height="2.5" fill="#bdbdbd"/><rect x="10" y="5" width="2.5" height="2.5" fill="#bdbdbd"/><rect x="5" y="5" width="2.5" height="2.5" fill="#bdbdbd"/><rect x="10" y="10" width="2.5" height="2.5" fill="#bdbdbd"/><rect x="5" y="10" width="2.5" height="2.5" fill="#bdbdbd"/><rect x="0" y="10" width="2.5" height="2.5" fill="#bdbdbd"/></svg>
<div class="a" style="left:1147px;top:424.5px;width:276.75px;height:71px;background:transparent;border:11.7px solid #f50000;"></div>
<div class="a" style="left:1482.5px;top:610.75px;width:166.25px;height:64.25px;background:transparent;border:12px solid #f50000;"></div>
</div>
</body></html>
